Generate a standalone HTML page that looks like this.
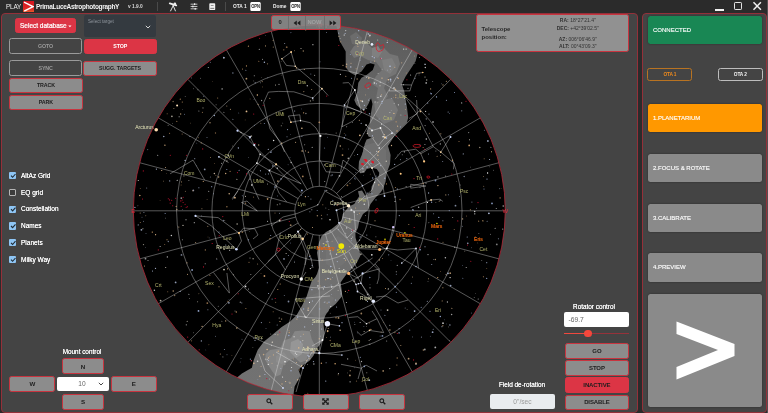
<!DOCTYPE html>
<html lang="en">
<head>
<meta charset="utf-8">
<title>PLAY - PrimaLuceAstrophotographY</title>
<style>
*{box-sizing:border-box;margin:0;padding:0}
html,body{width:768px;height:413px;overflow:hidden;background:#2b2b2b;font-family:"Liberation Sans",sans-serif;color:#fff}
.abs{position:absolute}
#top{position:absolute;left:0;top:0;width:768px;height:13px;background:#2b2b2b}
#top span{position:absolute;white-space:nowrap}
.panel{position:absolute;background:#444;border:1px solid #943039;border-radius:4px}
#main{left:1px;top:13px;width:637px;height:399.5px}
#side{left:642px;top:13px;width:125.3px;height:399.5px}
#sky{position:absolute;left:0;top:0}
.btn{position:absolute;display:flex;align-items:center;justify-content:center;font-weight:bold;font-size:5.3px;letter-spacing:-0.12px;border-radius:2.5px;color:#1d1d1d;background:#8c8c8c;border:1px solid #c8343f;white-space:nowrap}
.btn.red{background:#dc3545;border-color:#dc3545;color:#fff}
.btn.out{background:transparent;border-color:#9a9a9a;color:#9a9a9a}
.sbtn{position:absolute;left:648px;width:114px;height:28.5px;border-radius:2.5px;background:#8a8a8a;color:#fff;font-size:6px;-webkit-text-stroke:0.12px #fff;display:flex;align-items:center;padding-left:5px;box-shadow:0 0 1.5px #222}
.chk{position:absolute;left:8.9px;width:7.4px;height:7.3px;border-radius:1px}
.chk.on{background:#8ec5f4}
.chk.off{border:0.9px solid #b4b4b4;background:#3b3b3b}
.lbl{position:absolute;left:21px;font-size:6.5px;color:#fff;white-space:nowrap;text-shadow:0 0 0.3px #fff}
.cap{position:absolute;font-size:6.4px;color:#fff;white-space:nowrap;text-align:center;text-shadow:0 0 0.3px #fff}
</style>
</head>
<body>
<div id="app" style="position:absolute;left:0;top:0;width:768px;height:413px;will-change:transform;overflow:hidden">
<div id="top">
  <span style="left:6px;top:3.1px;font-size:6.3px;letter-spacing:-0.15px;color:#eee">PLAY</span>
  <svg class="abs" style="left:22.8px;top:1px" width="11.4" height="11.4" viewBox="0 0 11.4 11.4"><defs><linearGradient id="lg" x1="0" y1="0" x2="0" y2="1"><stop offset="0" stop-color="#d4141f"/><stop offset="0.7" stop-color="#dc2a24"/><stop offset="1" stop-color="#e8602c"/></linearGradient></defs><rect width="11.4" height="11.4" rx="0.8" fill="url(#lg)"/><path d="M1 1.2 L10 5.6 L1.2 10.2" fill="none" stroke="#fff" stroke-width="1.5" stroke-linejoin="miter"/></svg>
  <span style="left:36px;top:2.6px;font-size:6.5px;font-weight:bold;letter-spacing:-0.3px;color:#f2f2f2">PrimaLuceAstrophotographY</span>
  <span style="left:128px;top:4px;font-size:4.8px;font-weight:bold;color:#ddd">v 1.9.0</span>
  <div class="abs" style="left:157px;top:2px;width:1px;height:9px;background:#4a4a4a"></div>
  <svg class="abs" style="left:168px;top:1px" width="10" height="12" viewBox="0 0 10 12"><path d="M1.8 2.4 L8.2 4.4" stroke="#eee" stroke-width="1.9" stroke-linecap="round" fill="none"/><path d="M5.4 4.2 L2.6 9.9 M5 4.2 L7.4 9.9" stroke="#eee" stroke-width="0.95" stroke-linecap="round" fill="none"/><circle cx="6.9" cy="2.9" r="1.3" fill="#eee"/></svg>
  <svg class="abs" style="left:189.5px;top:2.8px" width="8" height="7" viewBox="0 0 8 7"><path d="M0.6 1.2 H7.4 M0.6 3.5 H7.4 M0.6 5.8 H7.4" stroke="#eee" stroke-width="0.75"/><rect x="4" y="0.3" width="1.2" height="1.8" fill="#eee"/><rect x="2.3" y="2.6" width="1.2" height="1.8" fill="#eee"/><rect x="4.6" y="4.9" width="1.2" height="1.8" fill="#eee"/></svg>
  <svg class="abs" style="left:208.5px;top:2.8px" width="7" height="7.4" viewBox="0 0 7 7.4"><rect x="0.3" y="0.2" width="5.9" height="6.9" rx="0.9" fill="#f0f0f0"/><rect x="1.8" y="2.1" width="2.8" height="0.6" fill="#555"/><rect x="1.3" y="4.9" width="3.9" height="0.7" fill="#444"/></svg>
  <div class="abs" style="left:225px;top:2px;width:1px;height:9px;background:#4a4a4a"></div>
  <span style="left:233px;top:4px;font-size:4.8px;font-weight:bold;color:#eee">OTA 1</span>
  <span style="left:248.9px;top:2.4px;width:13.1px;height:8.2px;background:#fff;border-radius:1.5px;color:#222;font-size:5.2px;font-weight:bold;text-align:center;line-height:8.8px;letter-spacing:-0.2px;transform:scaleX(0.8)">OPN</span>
  <span style="left:273px;top:4px;font-size:4.8px;font-weight:bold;color:#eee">Dome</span>
  <span style="left:288.9px;top:2.4px;width:13.1px;height:8.2px;background:#fff;border-radius:1.5px;color:#222;font-size:5.2px;font-weight:bold;text-align:center;line-height:8.8px;letter-spacing:-0.2px;transform:scaleX(0.8)">OPN</span>
  <div class="abs" style="left:714.5px;top:8.9px;width:9px;height:1.7px;background:#f2f2f2"></div>
  <div class="abs" style="left:733.5px;top:1.5px;width:8.5px;height:8.5px;border:1.1px solid #e4e4e4;border-radius:1.2px"></div>
  <svg class="abs" style="left:752.3px;top:1px" width="11" height="10" viewBox="0 0 11 10"><path d="M1.5 1.3 L8.9 8.8 M8.9 1.3 L1.5 8.8" stroke="#f0f0f0" stroke-width="1.5"/></svg>
  <div class="abs" style="left:767.2px;top:0;width:1px;height:413px;background:#565052"></div>
</div>

<div id="main" class="panel"></div>
<div id="side" class="panel"></div>

<svg id="sky" width="768" height="413" viewBox="0 0 768 413">
<defs><clipPath id="dc"><circle cx="319.3" cy="210.8" r="186.0"/></clipPath><linearGradient id="mwg" gradientUnits="userSpaceOnUse" x1="0" y1="25" x2="0" y2="397"><stop offset="0" stop-color="#5c5c5c"/><stop offset="0.18" stop-color="#656565"/><stop offset="0.5" stop-color="#6e6e6e"/><stop offset="1" stop-color="#727272"/></linearGradient></defs>
<circle cx="319.3" cy="210.8" r="186.0" fill="#000"/>
<g clip-path="url(#dc)">
<polygon points="336.5,26.0 339.4,40.5 345.7,51.5 345.7,67.6 350.0,72.6 355.0,75.2 361.5,71.4 366.5,64.4 370.3,63.2 374.7,64.4 372.8,70.0 366.5,75.0 361.5,77.7 358.3,82.7 357.0,92.8 354.3,100.0 356.5,105.0 364.0,111.3 368.5,103.8 371.0,98.0 372.5,104.0 370.4,116.4 369.7,124.0 366.6,131.5 368.5,136.5 371.6,137.8 366.6,139.5 364.7,144.0 364.2,148.0 362.3,153.8 359.0,161.4 358.5,169.0 360.4,173.3 364.2,172.7 366.7,169.0 371.7,167.7 376.7,169.0 379.3,172.7 378.6,176.5 374.2,181.5 371.7,186.6 371.0,192.6 368.6,193.5 365.5,196.3 362.0,190.5 358.0,191.3 359.2,196.3 354.2,203.9 349.0,206.4 342.8,214.0 341.6,220.3 337.8,224.0 331.5,229.0 326.0,232.0 321.5,236.3 319.0,242.6 317.0,252.7 318.4,261.5 319.0,267.8 317.0,274.0 315.4,277.0 311.6,281.3 309.0,288.9 306.6,296.4 301.6,306.5 296.5,315.3 290.2,321.6 281.7,327.0 275.7,332.0 263.8,341.8 257.8,349.8 253.8,359.7 251.9,367.7 241.9,373.6 236.5,378.0 236.3,378.4 241.7,381.0 247.2,383.4 252.8,385.6 258.4,387.6 264.1,389.5 269.9,391.2 275.7,392.6 281.6,394.0 287.5,395.1 293.4,396.0 293.6,393.5 294.6,386.5 298.5,379.6 300.5,375.6 298.5,369.7 303.5,364.7 309.5,360.7 313.4,355.8 317.4,347.8 323.4,339.9 324.4,332.0 323.4,324.0 323.6,320.3 325.5,315.3 329.3,309.0 335.6,304.0 341.9,296.4 341.9,291.4 340.6,282.6 343.0,279.0 346.7,274.0 353.0,267.8 356.8,262.7 360.6,255.2 358.0,246.4 355.5,237.6 355.4,233.0 358.0,227.8 359.2,221.5 363.0,214.0 368.0,210.2 370.5,203.9 375.6,197.6 380.6,192.6 383.0,189.0 385.6,181.5 386.8,172.7 390.0,163.9 390.6,155.0 388.0,146.0 395.6,134.0 406.9,122.7 408.2,117.6 407.0,107.6 405.6,99.0 404.3,91.5 401.8,84.0 405.6,76.4 410.6,68.9 415.6,61.3 417.5,54.0 418.6,52.3 411.1,47.9 403.4,43.8 395.5,40.0 387.4,36.6 379.2,33.7 370.9,31.1 362.4,28.8 353.9,27.0 345.3,25.6 336.6,24.6" fill="url(#mwg)"/>
<polygon points="350.0,36.0 356.0,32.0 362.0,38.0 360.0,46.0 352.0,44.0" fill="#6c6c6c"/>
<polygon points="358.0,44.0 364.0,40.0 370.0,46.0 376.0,52.0 384.0,48.0 390.0,54.0 398.0,56.0 400.0,64.0 396.0,74.0 388.0,78.0 384.0,88.0 388.0,96.0 382.0,104.0 376.0,98.0 378.0,88.0 372.0,84.0 376.0,76.0 382.0,70.0 376.0,62.0 368.0,60.0 360.0,56.0 354.0,58.0 350.0,52.0 354.0,46.0" fill="#757575"/>
<polygon points="372.0,48.0 378.0,46.0 382.0,52.0 378.0,58.0 372.0,56.0" fill="#808080"/>
<polygon points="382.0,60.0 392.0,58.0 396.0,66.0 390.0,74.0 384.0,70.0" fill="#7e7e7e"/>
<polygon points="374.0,102.0 392.0,98.0 398.0,110.0 394.0,120.0 384.0,124.0 376.0,116.0" fill="#777777"/>
<polygon points="364.0,146.0 376.0,142.0 386.0,150.0 386.0,166.0 378.0,168.0 366.0,164.0 362.0,156.0" fill="#707070"/>
<polygon points="326.0,244.0 338.0,236.0 350.0,244.0 348.0,260.0 336.0,270.0 326.0,264.0" fill="#737373"/>
<polygon points="310.0,296.0 324.0,290.0 334.0,298.0 328.0,312.0 316.0,318.0 308.0,310.0" fill="#747474"/>
<polygon points="265.5,354.0 270.0,350.0 280.6,348.3 283.4,340.8 291.0,338.0 294.7,331.3 302.3,330.4 309.8,331.3 311.7,338.9 315.5,346.4 309.8,352.0 306.0,360.6 300.4,362.5 294.7,357.7 289.0,360.6 283.4,365.3 280.6,374.7 275.8,376.6 272.0,371.0 268.3,365.3 265.5,360.6" fill="#868686"/>
<polygon points="291.0,342.0 298.0,339.0 303.0,344.0 302.0,354.0 296.0,358.0 290.0,352.0" fill="#969696"/>
<polygon points="276.0,356.0 284.0,352.0 288.0,358.0 282.0,364.0 276.0,362.0" fill="#8c8c8c"/>
<g fill="none" stroke="#e0e0e0" stroke-opacity="0.52" stroke-width="0.75">
<circle cx="319.3" cy="210.8" r="24.49"/>
<circle cx="319.3" cy="210.8" r="49.84"/>
<circle cx="319.3" cy="210.8" r="77.04"/>
<circle cx="319.3" cy="210.8" r="107.39"/>
<circle cx="319.3" cy="210.8" r="142.72"/>
<line x1="343.8" y1="210.8" x2="505.3" y2="210.8"/>
<line x1="343.0" y1="217.1" x2="499.0" y2="258.9"/>
<line x1="340.5" y1="223.0" x2="480.4" y2="303.8"/>
<line x1="336.6" y1="228.1" x2="450.8" y2="342.3"/>
<line x1="331.5" y1="232.0" x2="412.3" y2="371.9"/>
<line x1="325.6" y1="234.5" x2="367.4" y2="390.5"/>
<line x1="319.3" y1="235.3" x2="319.3" y2="396.8"/>
<line x1="313.0" y1="234.5" x2="271.2" y2="390.5"/>
<line x1="307.1" y1="232.0" x2="226.3" y2="371.9"/>
<line x1="302.0" y1="228.1" x2="187.8" y2="342.3"/>
<line x1="298.1" y1="223.0" x2="158.2" y2="303.8"/>
<line x1="295.6" y1="217.1" x2="139.6" y2="258.9"/>
<line x1="294.8" y1="210.8" x2="133.3" y2="210.8"/>
<line x1="295.6" y1="204.5" x2="139.6" y2="162.7"/>
<line x1="298.1" y1="198.6" x2="158.2" y2="117.8"/>
<line x1="302.0" y1="193.5" x2="187.8" y2="79.3"/>
<line x1="307.1" y1="189.6" x2="226.3" y2="49.7"/>
<line x1="313.0" y1="187.1" x2="271.2" y2="31.1"/>
<line x1="319.3" y1="186.3" x2="319.3" y2="24.8"/>
<line x1="325.6" y1="187.1" x2="367.4" y2="31.1"/>
<line x1="331.5" y1="189.6" x2="412.3" y2="49.7"/>
<line x1="336.6" y1="193.5" x2="450.8" y2="79.3"/>
<line x1="340.5" y1="198.6" x2="480.4" y2="117.8"/>
<line x1="343.0" y1="204.5" x2="499.0" y2="162.7"/>
</g>
<g fill="none" stroke="#f2f2f2" stroke-opacity="0.62" stroke-width="0.6" stroke-linejoin="round">
<polyline points="291.1,52.1 281.9,58.8 286.4,65.4 295.3,66.3 291.1,52.1"/>
<polyline points="295.3,66.3 321.9,88.7 328.2,95.6"/>
<polyline points="321.9,88.7 312.7,98.1 301.8,94.3 293.8,91.8 278.4,91.4 268.4,92.1 263.7,102.6 270.0,129.0 281.0,142.5 284.5,152.0"/>
<polyline points="312.7,98.1 313.2,101.0"/>
<polyline points="288.4,116.0 299.8,114.8 300.5,120.5 290.9,122.2 288.4,116.0"/>
<polyline points="300.5,120.5 310.2,122.7 316.0,128.0 320.4,135.9"/>
<polyline points="342.7,83.0 348.6,82.6 354.9,90.0 344.4,105.1 341.9,126.8 353.0,121.0 361.6,112.6 354.9,90.0"/>
<polyline points="344.4,105.1 361.6,112.6"/>
<polyline points="422.8,72.5 416.6,73.4 411.6,85.0 400.7,84.7"/>
<polyline points="411.6,85.0 409.9,90.9 389.0,90.9"/>
<polyline points="366.0,125.0 372.0,130.5 380.5,128.0 385.0,137.5 392.0,133.0"/>
<polyline points="372.5,138.0 378.0,146.0 384.8,137.8"/>
<polyline points="406.6,99.3 416.6,113.5 424.1,129.2 433.3,146.7 440.8,152.1 450.5,137.0"/>
<polyline points="416.6,100.0 417.4,113.5 409.0,118.5"/>
<polyline points="440.8,152.1 454.2,163.4 453.4,169.3"/>
<polyline points="394.9,159.3 401.5,151.4 415.8,149.2 420.8,153.7 424.1,161.4"/>
<polyline points="433.3,146.7 420.8,153.7"/>
<polyline points="410.7,184.3 425.8,186.0 410.7,188.2 410.7,184.3"/>
<polyline points="410.7,207.5 431.1,200.0 440.0,199.2 442.8,201.4"/>
<polyline points="366.0,160.0 372.0,168.0 376.0,178.0 372.0,190.0 364.0,197.0 358.0,203.0"/>
<polyline points="376.0,178.0 383.0,186.0 384.5,196.0"/>
<polyline points="372.0,168.0 380.0,163.0"/>
<polyline points="320.4,135.9 319.6,159.3 326.2,171.8 340.4,172.6 343.0,160.1 360.5,172.6"/>
<polyline points="348.5,205.8 336.5,210.2 339.0,222.8 347.0,238.0 355.5,230.0 354.2,212.0 348.5,205.8"/>
<polyline points="348.5,205.8 340.0,199.0 333.4,195.7"/>
<polyline points="333.4,195.7 325.0,191.0 318.0,205.0 308.0,209.0 297.0,213.5 283.0,217.0 271.0,226.0"/>
<polyline points="237.5,130.7 250.0,137.0 254.3,145.1 260.2,154.2 256.9,163.1 269.4,170.5 276.1,164.3 260.2,154.2"/>
<polyline points="276.1,164.3 301.2,183.8 269.4,170.5"/>
<polyline points="256.9,163.1 248.4,171.3 243.9,180.6 232.5,199.5"/>
<polyline points="248.4,171.3 252.7,185.6 259.0,199.5"/>
<polyline points="269.4,170.5 279.1,193.2 286.7,202.0"/>
<polyline points="218.9,156.8 228.6,162.6"/>
<polyline points="170.1,173.8 193.0,160.1 204.7,180.1"/>
<polyline points="232.3,198.4 238.1,190.8"/>
<polyline points="241.5,202.5 257.3,210.9 247.0,201.0 241.5,202.5"/>
<polyline points="195.5,215.9 218.1,217.6 239.0,233.1 241.5,241.0 236.4,249.3 211.4,225.9 195.5,215.9"/>
<polyline points="239.0,233.1 243.6,228.1 254.8,228.8 258.0,235.0 253.0,239.0"/>
<polyline points="280.4,232.7 275.4,254.2 267.8,261.7"/>
<polyline points="275.4,254.2 285.4,270.0"/>
<polyline points="302.6,238.8 306.0,247.0 311.0,258.0 313.0,268.0"/>
<polyline points="298.0,231.5 302.0,243.0 306.0,253.0 305.0,265.0"/>
<polyline points="302.6,238.8 298.0,231.5"/>
<polyline points="301.3,279.0 306.0,272.0"/>
<polyline points="213.5,272.5 229.4,293.1 226.9,273.0"/>
<polyline points="295.0,299.0 306.0,318.0 322.0,296.0 331.0,290.0 339.0,283.0"/>
<polyline points="295.0,299.0 330.0,296.0"/>
<polyline points="348.7,273.4 357.5,278.1 362.6,273.4"/>
<polyline points="348.7,273.4 356.0,284.5 357.5,291.5"/>
<polyline points="362.6,273.4 360.9,283.2 373.4,301.2"/>
<polyline points="356.0,284.5 358.4,283.8 360.9,283.2"/>
<polyline points="357.5,291.5 373.4,301.2"/>
<polyline points="348.7,273.4 356.7,268.1 372.6,258.0"/>
<polyline points="375.1,263.9 379.3,268.9 378.8,278.1 377.0,284.0"/>
<polyline points="362.6,273.4 379.3,268.9"/>
<polyline points="356.7,268.1 352.0,258.0 349.0,252.0"/>
<polyline points="352.5,248.4 379.6,249.4 386.8,248.4 397.7,250.0 416.0,248.4 418.5,268.4"/>
<polyline points="416.0,248.4 401.8,263.1"/>
<polyline points="386.8,248.4 389.0,244.0 393.2,227.1"/>
<polyline points="348.6,317.5 357.8,316.7 366.5,323.7 377.0,318.7 372.0,310.9"/>
<polyline points="356.9,331.4 361.1,335.4 369.5,330.4 383.7,332.6 377.0,318.7"/>
<polyline points="327.4,323.7 339.4,325.9"/>
<polyline points="327.4,323.7 322.5,340.0 319.3,353.1 341.9,355.1"/>
<polyline points="319.3,353.1 312.0,352.0 303.0,368.0 296.0,392.0"/>
<polyline points="322.5,340.0 312.0,346.0"/>
<polyline points="341.0,364.3 361.1,368.2 366.1,365.2 377.0,371.0"/>
<polyline points="361.1,368.2 358.0,379.0"/>
<polyline points="259.0,354.0 265.0,371.0 283.0,388.0"/>
<polyline points="303.0,368.0 290.0,360.0 276.0,352.0"/>
<polyline points="376.0,297.0 386.0,296.0 398.0,303.0 408.0,300.0"/>
</g>
<circle cx="253.8" cy="80.9" r="0.40" fill="#c8c8c8" fill-opacity="0.92"/>
<circle cx="168.3" cy="241.6" r="0.75" fill="#b9c6e6" fill-opacity="0.57"/>
<circle cx="294.6" cy="50.8" r="0.45" fill="#f0c898" fill-opacity="0.74"/>
<circle cx="216.3" cy="258.2" r="0.40" fill="#c89868" fill-opacity="0.81"/>
<circle cx="340.4" cy="74.3" r="0.60" fill="#ffffff" fill-opacity="0.79"/>
<circle cx="345.7" cy="233.2" r="0.50" fill="#c8c8c8" fill-opacity="0.81"/>
<circle cx="371.0" cy="163.3" r="0.75" fill="#aab8d8" fill-opacity="0.58"/>
<circle cx="386.4" cy="183.9" r="0.55" fill="#d8a870" fill-opacity="0.81"/>
<circle cx="301.9" cy="136.3" r="0.50" fill="#aab8d8" fill-opacity="0.90"/>
<circle cx="163.8" cy="136.5" r="0.65" fill="#c8d4f4" fill-opacity="0.88"/>
<circle cx="177.2" cy="180.3" r="0.55" fill="#ffffff" fill-opacity="0.97"/>
<circle cx="290.2" cy="382.7" r="0.45" fill="#f0c898" fill-opacity="0.81"/>
<circle cx="459.0" cy="141.5" r="0.55" fill="#c89868" fill-opacity="0.77"/>
<circle cx="168.1" cy="125.2" r="0.45" fill="#d8d8d8" fill-opacity="0.88"/>
<circle cx="248.5" cy="239.8" r="0.65" fill="#9fb2dc" fill-opacity="0.87"/>
<circle cx="463.3" cy="153.9" r="0.65" fill="#c8d4f4" fill-opacity="0.63"/>
<circle cx="419.1" cy="72.9" r="0.50" fill="#e0b888" fill-opacity="0.73"/>
<circle cx="300.4" cy="229.2" r="0.50" fill="#e0b888" fill-opacity="0.94"/>
<circle cx="236.9" cy="179.3" r="0.55" fill="#e8e0d0" fill-opacity="0.95"/>
<circle cx="198.9" cy="111.1" r="0.50" fill="#d8d8d8" fill-opacity="0.77"/>
<circle cx="352.5" cy="122.5" r="0.40" fill="#ffffff" fill-opacity="0.74"/>
<circle cx="270.7" cy="235.5" r="0.50" fill="#aab8d8" fill-opacity="0.94"/>
<circle cx="486.8" cy="268.4" r="0.40" fill="#d8a870" fill-opacity="0.95"/>
<circle cx="423.4" cy="350.1" r="0.75" fill="#e0b888" fill-opacity="0.73"/>
<circle cx="279.9" cy="203.9" r="0.60" fill="#d8d8d8" fill-opacity="0.64"/>
<circle cx="499.6" cy="188.7" r="0.45" fill="#c8d4f4" fill-opacity="0.82"/>
<circle cx="171.4" cy="235.6" r="0.75" fill="#c8c8c8" fill-opacity="0.98"/>
<circle cx="361.6" cy="51.0" r="0.50" fill="#c89868" fill-opacity="0.72"/>
<circle cx="369.3" cy="380.2" r="0.90" fill="#c8d4f4" fill-opacity="0.76"/>
<circle cx="176.2" cy="206.4" r="0.65" fill="#d8a870" fill-opacity="0.77"/>
<circle cx="260.8" cy="123.3" r="0.50" fill="#f0c898" fill-opacity="0.56"/>
<circle cx="487.1" cy="221.3" r="0.50" fill="#aab8d8" fill-opacity="0.79"/>
<circle cx="143.4" cy="221.3" r="0.45" fill="#aab8d8" fill-opacity="0.93"/>
<circle cx="326.1" cy="362.7" r="0.55" fill="#b9c6e6" fill-opacity="0.79"/>
<circle cx="423.1" cy="147.4" r="0.50" fill="#c89868" fill-opacity="0.92"/>
<circle cx="433.2" cy="329.2" r="0.50" fill="#b9c6e6" fill-opacity="0.78"/>
<circle cx="265.6" cy="35.6" r="0.40" fill="#9fb2dc" fill-opacity="0.76"/>
<circle cx="205.3" cy="249.9" r="0.55" fill="#d8a870" fill-opacity="0.91"/>
<circle cx="402.3" cy="154.8" r="0.55" fill="#c8c8c8" fill-opacity="0.65"/>
<circle cx="217.7" cy="98.0" r="0.50" fill="#d8a870" fill-opacity="0.83"/>
<circle cx="311.7" cy="267.7" r="0.45" fill="#e8e0d0" fill-opacity="0.60"/>
<circle cx="277.8" cy="289.5" r="0.50" fill="#d8a870" fill-opacity="0.95"/>
<circle cx="294.7" cy="261.3" r="0.45" fill="#aab8d8" fill-opacity="0.73"/>
<circle cx="282.6" cy="377.0" r="0.50" fill="#ffffff" fill-opacity="1.00"/>
<circle cx="143.5" cy="244.6" r="0.65" fill="#e8e0d0" fill-opacity="0.62"/>
<circle cx="377.8" cy="155.2" r="0.75" fill="#f0c898" fill-opacity="0.61"/>
<circle cx="375.0" cy="220.7" r="0.50" fill="#e0b888" fill-opacity="0.99"/>
<circle cx="205.8" cy="349.9" r="0.40" fill="#9fb2dc" fill-opacity="0.65"/>
<circle cx="319.7" cy="308.9" r="0.55" fill="#9fb2dc" fill-opacity="0.79"/>
<circle cx="408.6" cy="358.7" r="0.90" fill="#f0c898" fill-opacity="0.74"/>
<circle cx="474.7" cy="211.4" r="0.75" fill="#ffffff" fill-opacity="0.79"/>
<circle cx="140.3" cy="188.5" r="0.50" fill="#c89868" fill-opacity="0.55"/>
<circle cx="430.6" cy="88.9" r="0.65" fill="#c89868" fill-opacity="0.88"/>
<circle cx="340.3" cy="146.1" r="0.75" fill="#f0c898" fill-opacity="0.80"/>
<circle cx="425.0" cy="64.3" r="0.75" fill="#d8d8d8" fill-opacity="0.66"/>
<circle cx="236.3" cy="312.1" r="0.75" fill="#d8a870" fill-opacity="0.80"/>
<circle cx="416.0" cy="364.2" r="0.65" fill="#c8d4f4" fill-opacity="0.83"/>
<circle cx="321.4" cy="215.3" r="0.55" fill="#d8a870" fill-opacity="0.78"/>
<circle cx="433.6" cy="213.7" r="0.50" fill="#aab8d8" fill-opacity="0.79"/>
<circle cx="208.7" cy="191.3" r="0.60" fill="#c8c8c8" fill-opacity="0.73"/>
<circle cx="250.8" cy="274.5" r="0.60" fill="#c8c8c8" fill-opacity="0.65"/>
<circle cx="245.9" cy="70.3" r="0.50" fill="#aab8d8" fill-opacity="0.84"/>
<circle cx="269.5" cy="119.0" r="0.50" fill="#d8a870" fill-opacity="0.65"/>
<circle cx="487.6" cy="173.0" r="0.65" fill="#ffffff" fill-opacity="1.00"/>
<circle cx="443.0" cy="84.9" r="0.60" fill="#f0c898" fill-opacity="0.73"/>
<circle cx="290.0" cy="157.5" r="0.45" fill="#aab8d8" fill-opacity="0.71"/>
<circle cx="259.0" cy="195.4" r="0.40" fill="#e0b888" fill-opacity="0.70"/>
<circle cx="365.4" cy="215.4" r="0.45" fill="#c8c8c8" fill-opacity="0.99"/>
<circle cx="172.3" cy="123.6" r="0.40" fill="#ffffff" fill-opacity="0.67"/>
<circle cx="181.5" cy="181.9" r="0.55" fill="#e0b888" fill-opacity="0.62"/>
<circle cx="475.2" cy="237.1" r="0.55" fill="#c8c8c8" fill-opacity="0.68"/>
<circle cx="430.7" cy="93.0" r="0.45" fill="#9fb2dc" fill-opacity="0.97"/>
<circle cx="369.3" cy="323.0" r="0.45" fill="#c89868" fill-opacity="0.94"/>
<circle cx="302.1" cy="151.0" r="0.75" fill="#e0b888" fill-opacity="0.97"/>
<circle cx="232.9" cy="72.9" r="0.75" fill="#aab8d8" fill-opacity="0.66"/>
<circle cx="249.4" cy="138.3" r="0.50" fill="#9fb2dc" fill-opacity="0.75"/>
<circle cx="383.3" cy="125.4" r="0.40" fill="#9fb2dc" fill-opacity="0.57"/>
<circle cx="140.2" cy="212.9" r="0.50" fill="#f0c898" fill-opacity="0.76"/>
<circle cx="437.9" cy="185.6" r="0.65" fill="#f0c898" fill-opacity="0.93"/>
<circle cx="279.5" cy="213.3" r="0.50" fill="#b9c6e6" fill-opacity="0.70"/>
<circle cx="442.9" cy="287.7" r="0.50" fill="#e0b888" fill-opacity="1.00"/>
<circle cx="460.6" cy="185.0" r="0.40" fill="#c8c8c8" fill-opacity="0.85"/>
<circle cx="275.0" cy="213.0" r="0.55" fill="#c89868" fill-opacity="0.66"/>
<circle cx="242.3" cy="195.7" r="0.50" fill="#9fb2dc" fill-opacity="0.75"/>
<circle cx="495.1" cy="228.3" r="0.50" fill="#d8d8d8" fill-opacity="0.98"/>
<circle cx="248.5" cy="157.4" r="0.40" fill="#c8d4f4" fill-opacity="0.72"/>
<circle cx="309.9" cy="211.8" r="0.50" fill="#b9c6e6" fill-opacity="0.78"/>
<circle cx="166.7" cy="173.4" r="0.40" fill="#e0b888" fill-opacity="0.56"/>
<circle cx="246.5" cy="111.4" r="0.90" fill="#f0c898" fill-opacity="0.93"/>
<circle cx="425.0" cy="246.7" r="0.55" fill="#aab8d8" fill-opacity="0.99"/>
<circle cx="188.9" cy="294.2" r="0.50" fill="#d8d8d8" fill-opacity="0.92"/>
<circle cx="399.3" cy="215.6" r="0.60" fill="#aab8d8" fill-opacity="0.87"/>
<circle cx="321.4" cy="363.3" r="0.75" fill="#c89868" fill-opacity="0.93"/>
<circle cx="432.6" cy="332.2" r="0.90" fill="#aab8d8" fill-opacity="0.86"/>
<circle cx="391.2" cy="110.3" r="0.40" fill="#d8d8d8" fill-opacity="0.61"/>
<circle cx="267.5" cy="63.8" r="0.65" fill="#f0c898" fill-opacity="0.57"/>
<circle cx="140.3" cy="222.5" r="0.50" fill="#d8a870" fill-opacity="0.67"/>
<circle cx="303.3" cy="50.9" r="0.75" fill="#f0c898" fill-opacity="0.59"/>
<circle cx="329.0" cy="302.2" r="0.65" fill="#9fb2dc" fill-opacity="0.91"/>
<circle cx="448.1" cy="112.1" r="0.50" fill="#b9c6e6" fill-opacity="0.88"/>
<circle cx="496.3" cy="208.5" r="0.60" fill="#c8c8c8" fill-opacity="0.77"/>
<circle cx="387.6" cy="310.1" r="0.90" fill="#e8e0d0" fill-opacity="0.84"/>
<circle cx="227.8" cy="301.3" r="0.55" fill="#c89868" fill-opacity="0.81"/>
<circle cx="233.3" cy="274.8" r="0.50" fill="#e8e0d0" fill-opacity="0.77"/>
<circle cx="397.0" cy="131.0" r="0.65" fill="#d8a870" fill-opacity="0.90"/>
<circle cx="502.8" cy="229.1" r="0.55" fill="#c8c8c8" fill-opacity="0.97"/>
<circle cx="139.8" cy="195.5" r="0.75" fill="#d8a870" fill-opacity="1.00"/>
<circle cx="277.2" cy="365.8" r="0.50" fill="#c8c8c8" fill-opacity="0.81"/>
<circle cx="186.0" cy="219.8" r="0.55" fill="#ffffff" fill-opacity="0.82"/>
<circle cx="368.3" cy="128.8" r="0.45" fill="#aab8d8" fill-opacity="0.71"/>
<circle cx="318.5" cy="350.7" r="0.60" fill="#d8d8d8" fill-opacity="0.62"/>
<circle cx="486.7" cy="278.4" r="0.60" fill="#9fb2dc" fill-opacity="0.88"/>
<circle cx="288.1" cy="164.7" r="0.45" fill="#c8d4f4" fill-opacity="0.55"/>
<circle cx="412.6" cy="336.9" r="0.45" fill="#b9c6e6" fill-opacity="0.87"/>
<circle cx="468.7" cy="132.6" r="0.55" fill="#c8c8c8" fill-opacity="0.73"/>
<circle cx="267.5" cy="184.0" r="0.55" fill="#d8d8d8" fill-opacity="0.68"/>
<circle cx="152.5" cy="271.1" r="0.50" fill="#b9c6e6" fill-opacity="0.99"/>
<circle cx="295.6" cy="142.2" r="0.55" fill="#e0b888" fill-opacity="0.95"/>
<circle cx="435.3" cy="259.5" r="0.75" fill="#f0c898" fill-opacity="0.64"/>
<circle cx="286.1" cy="253.5" r="0.50" fill="#e8e0d0" fill-opacity="0.94"/>
<circle cx="313.9" cy="364.0" r="0.75" fill="#ffffff" fill-opacity="0.63"/>
<circle cx="287.6" cy="129.6" r="0.55" fill="#aab8d8" fill-opacity="0.88"/>
<circle cx="376.1" cy="175.9" r="0.50" fill="#9fb2dc" fill-opacity="0.77"/>
<circle cx="382.1" cy="69.3" r="0.50" fill="#c8c8c8" fill-opacity="0.64"/>
<circle cx="470.3" cy="209.7" r="0.50" fill="#d8a870" fill-opacity="0.96"/>
<circle cx="185.2" cy="96.4" r="0.45" fill="#ffffff" fill-opacity="0.70"/>
<circle cx="167.2" cy="113.8" r="0.55" fill="#c89868" fill-opacity="0.64"/>
<circle cx="275.7" cy="302.3" r="0.50" fill="#e0b888" fill-opacity="0.67"/>
<circle cx="413.1" cy="210.1" r="0.90" fill="#c8d4f4" fill-opacity="0.61"/>
<circle cx="320.6" cy="259.0" r="0.50" fill="#c8c8c8" fill-opacity="0.67"/>
<circle cx="225.7" cy="173.5" r="0.65" fill="#e0b888" fill-opacity="0.98"/>
<circle cx="397.2" cy="358.0" r="0.65" fill="#c89868" fill-opacity="0.77"/>
<circle cx="478.6" cy="221.2" r="0.65" fill="#d8a870" fill-opacity="0.66"/>
<circle cx="327.6" cy="278.5" r="0.65" fill="#c8c8c8" fill-opacity="0.80"/>
<circle cx="373.4" cy="137.8" r="0.50" fill="#e8e0d0" fill-opacity="0.66"/>
<circle cx="370.0" cy="284.7" r="0.45" fill="#c8c8c8" fill-opacity="0.58"/>
<circle cx="328.4" cy="241.6" r="0.60" fill="#9fb2dc" fill-opacity="0.65"/>
<circle cx="245.5" cy="196.2" r="0.55" fill="#e8e0d0" fill-opacity="0.93"/>
<circle cx="223.5" cy="220.6" r="0.75" fill="#b9c6e6" fill-opacity="0.56"/>
<circle cx="286.5" cy="266.5" r="0.40" fill="#d8d8d8" fill-opacity="0.64"/>
<circle cx="462.5" cy="265.5" r="0.45" fill="#9fb2dc" fill-opacity="0.65"/>
<circle cx="291.1" cy="162.5" r="0.65" fill="#d8d8d8" fill-opacity="0.86"/>
<circle cx="400.5" cy="159.6" r="0.60" fill="#b9c6e6" fill-opacity="0.55"/>
<circle cx="242.0" cy="339.2" r="0.45" fill="#b9c6e6" fill-opacity="0.77"/>
<circle cx="207.9" cy="309.7" r="0.50" fill="#b9c6e6" fill-opacity="0.76"/>
<circle cx="231.9" cy="355.6" r="0.45" fill="#c89868" fill-opacity="0.77"/>
<circle cx="203.0" cy="107.9" r="0.60" fill="#e8e0d0" fill-opacity="0.58"/>
<circle cx="354.6" cy="367.8" r="0.40" fill="#b9c6e6" fill-opacity="0.56"/>
<circle cx="355.1" cy="179.3" r="0.40" fill="#ffffff" fill-opacity="0.73"/>
<circle cx="479.9" cy="147.3" r="0.50" fill="#e8e0d0" fill-opacity="0.97"/>
<circle cx="380.5" cy="165.6" r="0.55" fill="#c8d4f4" fill-opacity="0.75"/>
<circle cx="163.3" cy="181.1" r="0.45" fill="#f0c898" fill-opacity="0.98"/>
<circle cx="210.5" cy="157.5" r="0.55" fill="#e0b888" fill-opacity="0.59"/>
<circle cx="395.7" cy="97.6" r="0.75" fill="#d8a870" fill-opacity="0.64"/>
<circle cx="268.8" cy="358.5" r="0.40" fill="#e8e0d0" fill-opacity="0.73"/>
<circle cx="435.3" cy="310.0" r="0.40" fill="#e0b888" fill-opacity="0.57"/>
<circle cx="228.9" cy="302.8" r="0.90" fill="#c8d4f4" fill-opacity="0.71"/>
<circle cx="257.9" cy="379.6" r="0.40" fill="#9fb2dc" fill-opacity="0.89"/>
<circle cx="389.8" cy="368.6" r="0.55" fill="#d8d8d8" fill-opacity="0.87"/>
<circle cx="354.9" cy="324.5" r="0.45" fill="#d8d8d8" fill-opacity="0.92"/>
<circle cx="173.2" cy="291.0" r="0.65" fill="#e0b888" fill-opacity="0.91"/>
<circle cx="182.7" cy="209.5" r="0.40" fill="#aab8d8" fill-opacity="0.69"/>
<circle cx="390.8" cy="81.1" r="0.50" fill="#c8d4f4" fill-opacity="0.94"/>
<circle cx="304.7" cy="316.4" r="0.90" fill="#c8c8c8" fill-opacity="0.78"/>
<circle cx="279.0" cy="84.3" r="0.60" fill="#c8c8c8" fill-opacity="0.84"/>
<circle cx="312.5" cy="227.4" r="0.50" fill="#e0b888" fill-opacity="0.95"/>
<circle cx="318.7" cy="288.8" r="0.65" fill="#ffffff" fill-opacity="0.66"/>
<circle cx="288.4" cy="255.6" r="0.50" fill="#aab8d8" fill-opacity="0.79"/>
<circle cx="421.2" cy="307.4" r="0.55" fill="#9fb2dc" fill-opacity="0.68"/>
<circle cx="232.9" cy="119.3" r="0.55" fill="#b9c6e6" fill-opacity="0.75"/>
<circle cx="202.4" cy="112.4" r="0.55" fill="#c89868" fill-opacity="0.63"/>
<circle cx="224.8" cy="220.6" r="0.45" fill="#e8e0d0" fill-opacity="0.76"/>
<circle cx="461.7" cy="110.8" r="0.65" fill="#c8d4f4" fill-opacity="0.57"/>
<circle cx="242.5" cy="69.1" r="0.50" fill="#c89868" fill-opacity="0.99"/>
<circle cx="350.2" cy="370.8" r="0.55" fill="#f0c898" fill-opacity="0.94"/>
<circle cx="300.4" cy="121.5" r="0.40" fill="#c8c8c8" fill-opacity="0.84"/>
<circle cx="397.3" cy="154.9" r="0.40" fill="#c8d4f4" fill-opacity="0.70"/>
<circle cx="437.9" cy="176.9" r="0.55" fill="#ffffff" fill-opacity="0.83"/>
<circle cx="317.7" cy="204.7" r="0.60" fill="#c8c8c8" fill-opacity="0.91"/>
<circle cx="380.3" cy="82.3" r="0.75" fill="#c8c8c8" fill-opacity="0.84"/>
<circle cx="281.3" cy="125.7" r="0.55" fill="#e8e0d0" fill-opacity="0.69"/>
<circle cx="487.9" cy="141.0" r="0.90" fill="#c8d4f4" fill-opacity="0.74"/>
<circle cx="431.7" cy="264.5" r="0.60" fill="#aab8d8" fill-opacity="0.73"/>
<circle cx="483.7" cy="186.3" r="0.50" fill="#e0b888" fill-opacity="0.60"/>
<circle cx="167.0" cy="239.7" r="0.55" fill="#d8a870" fill-opacity="0.90"/>
<circle cx="186.3" cy="324.8" r="0.60" fill="#c8c8c8" fill-opacity="0.81"/>
<circle cx="478.2" cy="299.1" r="0.50" fill="#ffffff" fill-opacity="0.71"/>
<circle cx="193.5" cy="88.7" r="0.45" fill="#c8c8c8" fill-opacity="0.72"/>
<circle cx="413.6" cy="319.5" r="0.50" fill="#9fb2dc" fill-opacity="0.61"/>
<circle cx="312.9" cy="44.7" r="0.60" fill="#c8c8c8" fill-opacity="0.96"/>
<circle cx="364.1" cy="331.5" r="0.50" fill="#e8e0d0" fill-opacity="0.90"/>
<circle cx="215.9" cy="175.3" r="0.50" fill="#d8a870" fill-opacity="0.63"/>
<circle cx="214.4" cy="173.5" r="0.75" fill="#ffffff" fill-opacity="0.72"/>
<circle cx="179.1" cy="116.7" r="0.50" fill="#d8d8d8" fill-opacity="0.95"/>
<circle cx="446.7" cy="274.9" r="0.55" fill="#c8c8c8" fill-opacity="0.73"/>
<circle cx="302.8" cy="340.6" r="0.55" fill="#e8e0d0" fill-opacity="0.74"/>
<circle cx="350.0" cy="183.2" r="0.55" fill="#d8a870" fill-opacity="0.78"/>
<circle cx="500.1" cy="197.9" r="0.65" fill="#c89868" fill-opacity="0.90"/>
<circle cx="303.8" cy="91.6" r="0.65" fill="#e0b888" fill-opacity="0.60"/>
<circle cx="181.1" cy="185.0" r="0.45" fill="#d8a870" fill-opacity="0.78"/>
<circle cx="377.7" cy="39.9" r="0.50" fill="#c8c8c8" fill-opacity="0.96"/>
<circle cx="250.0" cy="292.8" r="0.45" fill="#d8d8d8" fill-opacity="0.89"/>
<circle cx="466.2" cy="267.6" r="0.50" fill="#d8d8d8" fill-opacity="0.94"/>
<circle cx="436.5" cy="96.9" r="0.65" fill="#9fb2dc" fill-opacity="0.98"/>
<circle cx="157.7" cy="155.3" r="0.55" fill="#ffffff" fill-opacity="0.70"/>
<circle cx="361.5" cy="361.5" r="0.65" fill="#ffffff" fill-opacity="0.66"/>
<circle cx="492.0" cy="203.4" r="0.90" fill="#9fb2dc" fill-opacity="0.83"/>
<circle cx="221.6" cy="163.3" r="0.50" fill="#ffffff" fill-opacity="0.73"/>
<circle cx="370.1" cy="128.3" r="0.55" fill="#e0b888" fill-opacity="0.63"/>
<circle cx="425.3" cy="67.6" r="0.75" fill="#d8d8d8" fill-opacity="0.84"/>
<circle cx="267.1" cy="349.5" r="0.75" fill="#f0c898" fill-opacity="0.81"/>
<circle cx="280.0" cy="321.5" r="0.55" fill="#e0b888" fill-opacity="1.00"/>
<circle cx="348.1" cy="158.8" r="0.45" fill="#d8a870" fill-opacity="0.65"/>
<circle cx="362.2" cy="381.2" r="0.55" fill="#f0c898" fill-opacity="0.66"/>
<circle cx="351.2" cy="271.7" r="0.55" fill="#aab8d8" fill-opacity="0.55"/>
<circle cx="362.5" cy="185.6" r="0.75" fill="#c8d4f4" fill-opacity="0.95"/>
<circle cx="182.4" cy="109.3" r="0.40" fill="#d8d8d8" fill-opacity="0.57"/>
<circle cx="344.3" cy="137.8" r="0.75" fill="#c8d4f4" fill-opacity="0.79"/>
<circle cx="287.0" cy="136.8" r="0.50" fill="#b9c6e6" fill-opacity="0.71"/>
<circle cx="441.5" cy="83.8" r="0.40" fill="#b9c6e6" fill-opacity="0.87"/>
<circle cx="301.0" cy="48.5" r="0.50" fill="#e8e0d0" fill-opacity="0.90"/>
<circle cx="282.8" cy="123.1" r="0.40" fill="#d8d8d8" fill-opacity="0.84"/>
<circle cx="342.5" cy="155.1" r="0.90" fill="#d8a870" fill-opacity="0.82"/>
<circle cx="325.8" cy="208.1" r="0.50" fill="#d8d8d8" fill-opacity="0.57"/>
<circle cx="331.0" cy="175.8" r="0.50" fill="#ffffff" fill-opacity="0.58"/>
<circle cx="338.2" cy="374.8" r="0.50" fill="#e0b888" fill-opacity="0.64"/>
<circle cx="359.5" cy="213.4" r="0.60" fill="#c89868" fill-opacity="0.63"/>
<circle cx="248.4" cy="136.5" r="0.40" fill="#aab8d8" fill-opacity="0.90"/>
<circle cx="447.4" cy="302.0" r="0.65" fill="#c8c8c8" fill-opacity="0.88"/>
<circle cx="301.6" cy="108.9" r="0.45" fill="#9fb2dc" fill-opacity="0.65"/>
<circle cx="147.7" cy="149.6" r="0.55" fill="#aab8d8" fill-opacity="0.57"/>
<circle cx="369.8" cy="277.5" r="0.75" fill="#9fb2dc" fill-opacity="0.68"/>
<circle cx="165.1" cy="213.6" r="0.50" fill="#9fb2dc" fill-opacity="0.96"/>
<circle cx="446.4" cy="100.2" r="0.50" fill="#aab8d8" fill-opacity="0.96"/>
<circle cx="204.7" cy="169.4" r="0.90" fill="#b9c6e6" fill-opacity="0.72"/>
<circle cx="332.8" cy="200.4" r="0.75" fill="#aab8d8" fill-opacity="0.55"/>
<circle cx="220.3" cy="353.9" r="0.50" fill="#e0b888" fill-opacity="0.83"/>
<circle cx="261.6" cy="77.6" r="0.40" fill="#d8d8d8" fill-opacity="0.57"/>
<circle cx="391.0" cy="260.6" r="0.45" fill="#aab8d8" fill-opacity="0.57"/>
<circle cx="451.9" cy="308.2" r="0.50" fill="#f0c898" fill-opacity="0.95"/>
<circle cx="173.1" cy="101.3" r="0.45" fill="#d8d8d8" fill-opacity="0.57"/>
<circle cx="448.7" cy="326.9" r="0.45" fill="#e8e0d0" fill-opacity="0.83"/>
<circle cx="310.8" cy="74.1" r="0.50" fill="#9fb2dc" fill-opacity="0.69"/>
<circle cx="290.9" cy="32.6" r="0.55" fill="#9fb2dc" fill-opacity="0.57"/>
<circle cx="416.0" cy="363.4" r="0.90" fill="#f0c898" fill-opacity="0.76"/>
<circle cx="240.3" cy="302.2" r="0.60" fill="#d8d8d8" fill-opacity="0.75"/>
<circle cx="420.9" cy="153.8" r="0.40" fill="#f0c898" fill-opacity="0.80"/>
<circle cx="399.1" cy="332.8" r="0.90" fill="#9fb2dc" fill-opacity="0.63"/>
<circle cx="134.9" cy="207.4" r="0.65" fill="#aab8d8" fill-opacity="0.91"/>
<circle cx="201.9" cy="208.8" r="0.55" fill="#f0c898" fill-opacity="0.67"/>
<circle cx="484.4" cy="130.3" r="0.50" fill="#aab8d8" fill-opacity="0.65"/>
<circle cx="418.6" cy="207.2" r="0.75" fill="#c8c8c8" fill-opacity="0.83"/>
<circle cx="265.6" cy="174.1" r="0.60" fill="#aab8d8" fill-opacity="0.59"/>
<circle cx="210.0" cy="122.7" r="0.75" fill="#f0c898" fill-opacity="0.63"/>
<circle cx="354.3" cy="281.2" r="0.90" fill="#e8e0d0" fill-opacity="0.57"/>
<circle cx="349.6" cy="218.9" r="0.65" fill="#e8e0d0" fill-opacity="0.80"/>
<circle cx="253.6" cy="197.1" r="0.55" fill="#c89868" fill-opacity="0.65"/>
<circle cx="257.6" cy="263.9" r="0.50" fill="#f0c898" fill-opacity="0.64"/>
<circle cx="245.5" cy="286.4" r="0.90" fill="#ffffff" fill-opacity="0.88"/>
<circle cx="357.6" cy="154.5" r="0.50" fill="#c8d4f4" fill-opacity="0.98"/>
<circle cx="378.0" cy="97.5" r="0.50" fill="#ffffff" fill-opacity="0.91"/>
<circle cx="406.1" cy="186.6" r="0.50" fill="#c8c8c8" fill-opacity="0.84"/>
<circle cx="173.1" cy="101.6" r="0.60" fill="#d8a870" fill-opacity="0.57"/>
<circle cx="281.7" cy="319.1" r="0.50" fill="#f0c898" fill-opacity="0.99"/>
<circle cx="229.0" cy="299.4" r="0.40" fill="#aab8d8" fill-opacity="0.66"/>
<circle cx="450.6" cy="285.6" r="0.90" fill="#aab8d8" fill-opacity="0.84"/>
<circle cx="448.0" cy="273.3" r="0.90" fill="#b9c6e6" fill-opacity="0.86"/>
<circle cx="372.0" cy="193.7" r="0.55" fill="#9fb2dc" fill-opacity="0.83"/>
<circle cx="169.7" cy="180.9" r="0.60" fill="#aab8d8" fill-opacity="0.87"/>
<circle cx="191.5" cy="340.8" r="0.65" fill="#d8a870" fill-opacity="0.56"/>
<circle cx="452.7" cy="217.6" r="0.50" fill="#e8e0d0" fill-opacity="0.70"/>
<circle cx="226.8" cy="105.9" r="0.50" fill="#f0c898" fill-opacity="0.71"/>
<circle cx="448.4" cy="194.7" r="0.50" fill="#aab8d8" fill-opacity="0.76"/>
<circle cx="270.9" cy="152.3" r="0.65" fill="#b9c6e6" fill-opacity="1.00"/>
<circle cx="201.7" cy="215.9" r="0.45" fill="#aab8d8" fill-opacity="0.99"/>
<circle cx="265.5" cy="45.9" r="0.55" fill="#e0b888" fill-opacity="0.73"/>
<circle cx="138.3" cy="180.5" r="0.60" fill="#e8e0d0" fill-opacity="0.86"/>
<circle cx="264.3" cy="123.4" r="0.50" fill="#9fb2dc" fill-opacity="0.88"/>
<circle cx="483.0" cy="220.9" r="0.50" fill="#e0b888" fill-opacity="0.76"/>
<circle cx="205.2" cy="263.7" r="0.50" fill="#ffffff" fill-opacity="0.71"/>
<circle cx="370.9" cy="329.4" r="0.60" fill="#d8a870" fill-opacity="1.00"/>
<circle cx="416.0" cy="266.5" r="0.65" fill="#c8d4f4" fill-opacity="0.90"/>
<circle cx="219.0" cy="286.8" r="0.55" fill="#e0b888" fill-opacity="0.86"/>
<circle cx="312.4" cy="324.4" r="0.55" fill="#c8d4f4" fill-opacity="0.66"/>
<circle cx="245.6" cy="203.2" r="0.60" fill="#c89868" fill-opacity="0.84"/>
<circle cx="378.5" cy="159.6" r="0.55" fill="#e0b888" fill-opacity="0.58"/>
<circle cx="425.0" cy="77.0" r="0.55" fill="#e8e0d0" fill-opacity="0.81"/>
<circle cx="377.8" cy="102.8" r="0.45" fill="#e8e0d0" fill-opacity="0.68"/>
<circle cx="359.6" cy="240.0" r="0.50" fill="#ffffff" fill-opacity="0.90"/>
<circle cx="262.2" cy="81.6" r="0.60" fill="#f0c898" fill-opacity="0.63"/>
<circle cx="464.8" cy="251.1" r="0.45" fill="#e8e0d0" fill-opacity="0.96"/>
<circle cx="337.3" cy="261.6" r="0.55" fill="#b9c6e6" fill-opacity="0.77"/>
<circle cx="445.5" cy="274.5" r="0.45" fill="#f0c898" fill-opacity="0.60"/>
<circle cx="289.2" cy="332.5" r="0.65" fill="#d8a870" fill-opacity="0.80"/>
<circle cx="313.5" cy="361.6" r="0.65" fill="#b9c6e6" fill-opacity="0.77"/>
<circle cx="334.0" cy="345.8" r="0.40" fill="#ffffff" fill-opacity="0.93"/>
<circle cx="307.4" cy="234.1" r="0.55" fill="#d8a870" fill-opacity="0.72"/>
<circle cx="289.1" cy="382.1" r="0.45" fill="#ffffff" fill-opacity="0.84"/>
<circle cx="369.9" cy="35.4" r="0.90" fill="#d8d8d8" fill-opacity="0.86"/>
<circle cx="479.8" cy="147.7" r="0.45" fill="#f0c898" fill-opacity="0.77"/>
<circle cx="415.0" cy="78.6" r="0.50" fill="#aab8d8" fill-opacity="0.74"/>
<circle cx="378.5" cy="151.8" r="0.75" fill="#f0c898" fill-opacity="0.90"/>
<circle cx="211.7" cy="186.7" r="0.60" fill="#9fb2dc" fill-opacity="0.80"/>
<circle cx="440.8" cy="133.8" r="0.65" fill="#e0b888" fill-opacity="0.70"/>
<circle cx="261.6" cy="100.5" r="0.65" fill="#c8c8c8" fill-opacity="0.70"/>
<circle cx="251.3" cy="136.1" r="0.90" fill="#e8e0d0" fill-opacity="0.59"/>
<circle cx="339.5" cy="175.8" r="0.90" fill="#d8d8d8" fill-opacity="0.73"/>
<circle cx="439.1" cy="201.5" r="0.40" fill="#f0c898" fill-opacity="0.96"/>
<circle cx="360.9" cy="254.2" r="0.90" fill="#e8e0d0" fill-opacity="0.59"/>
<circle cx="148.0" cy="260.5" r="0.50" fill="#c8c8c8" fill-opacity="0.85"/>
<circle cx="456.6" cy="181.6" r="0.45" fill="#e8e0d0" fill-opacity="0.56"/>
<circle cx="248.4" cy="289.0" r="0.55" fill="#ffffff" fill-opacity="0.74"/>
<circle cx="251.8" cy="185.0" r="0.90" fill="#d8d8d8" fill-opacity="0.77"/>
<circle cx="327.5" cy="331.6" r="0.60" fill="#c89868" fill-opacity="0.86"/>
<circle cx="283.8" cy="49.8" r="0.60" fill="#c89868" fill-opacity="0.82"/>
<circle cx="310.2" cy="178.2" r="0.45" fill="#c8c8c8" fill-opacity="0.84"/>
<circle cx="212.3" cy="81.3" r="0.40" fill="#e0b888" fill-opacity="0.55"/>
<circle cx="387.7" cy="70.1" r="0.45" fill="#b9c6e6" fill-opacity="0.94"/>
<circle cx="400.9" cy="114.9" r="0.50" fill="#d8d8d8" fill-opacity="0.71"/>
<circle cx="411.3" cy="283.3" r="0.50" fill="#aab8d8" fill-opacity="0.89"/>
<circle cx="242.3" cy="232.2" r="0.65" fill="#d8a870" fill-opacity="0.85"/>
<circle cx="388.7" cy="254.8" r="0.60" fill="#9fb2dc" fill-opacity="0.69"/>
<circle cx="356.5" cy="381.1" r="0.65" fill="#c89868" fill-opacity="0.58"/>
<circle cx="270.0" cy="238.7" r="0.65" fill="#d8a870" fill-opacity="0.85"/>
<circle cx="187.2" cy="321.4" r="0.55" fill="#e8e0d0" fill-opacity="0.62"/>
<circle cx="431.6" cy="202.2" r="0.65" fill="#9fb2dc" fill-opacity="0.90"/>
<circle cx="344.2" cy="133.6" r="0.40" fill="#c89868" fill-opacity="0.99"/>
<circle cx="394.9" cy="332.6" r="0.55" fill="#c89868" fill-opacity="0.88"/>
<circle cx="443.0" cy="242.3" r="0.50" fill="#e0b888" fill-opacity="0.72"/>
<circle cx="273.2" cy="311.8" r="0.50" fill="#d8a870" fill-opacity="0.68"/>
<circle cx="290.5" cy="243.0" r="0.40" fill="#9fb2dc" fill-opacity="0.92"/>
<circle cx="435.3" cy="347.4" r="0.90" fill="#ffffff" fill-opacity="0.67"/>
<circle cx="449.9" cy="325.0" r="0.65" fill="#c8d4f4" fill-opacity="0.79"/>
<circle cx="334.2" cy="205.1" r="0.60" fill="#b9c6e6" fill-opacity="0.90"/>
<circle cx="248.4" cy="46.2" r="0.60" fill="#d8a870" fill-opacity="0.87"/>
<circle cx="477.8" cy="242.9" r="0.40" fill="#e0b888" fill-opacity="0.76"/>
<circle cx="420.5" cy="111.4" r="0.90" fill="#f0c898" fill-opacity="0.95"/>
<circle cx="462.6" cy="218.9" r="0.65" fill="#f0c898" fill-opacity="0.82"/>
<circle cx="203.7" cy="96.3" r="0.50" fill="#aab8d8" fill-opacity="0.68"/>
<circle cx="348.3" cy="158.3" r="0.75" fill="#ffffff" fill-opacity="0.66"/>
<circle cx="476.5" cy="208.3" r="0.45" fill="#c8d4f4" fill-opacity="0.83"/>
<circle cx="426.2" cy="82.9" r="0.90" fill="#d8d8d8" fill-opacity="0.71"/>
<circle cx="326.5" cy="32.5" r="0.40" fill="#b9c6e6" fill-opacity="1.00"/>
<circle cx="455.5" cy="205.7" r="0.90" fill="#b9c6e6" fill-opacity="0.67"/>
<circle cx="423.2" cy="183.3" r="0.65" fill="#c89868" fill-opacity="0.92"/>
<circle cx="152.3" cy="232.1" r="0.65" fill="#d8a870" fill-opacity="0.98"/>
<circle cx="355.8" cy="172.6" r="0.45" fill="#aab8d8" fill-opacity="0.98"/>
<circle cx="229.0" cy="234.8" r="0.45" fill="#e8e0d0" fill-opacity="0.78"/>
<circle cx="201.3" cy="340.9" r="0.55" fill="#b9c6e6" fill-opacity="1.00"/>
<circle cx="228.5" cy="155.7" r="0.75" fill="#d8d8d8" fill-opacity="0.93"/>
<circle cx="397.3" cy="265.4" r="0.65" fill="#d8d8d8" fill-opacity="0.60"/>
<circle cx="207.3" cy="303.1" r="0.90" fill="#c89868" fill-opacity="0.75"/>
<circle cx="376.0" cy="199.9" r="0.55" fill="#9fb2dc" fill-opacity="0.73"/>
<circle cx="272.8" cy="166.0" r="0.65" fill="#b9c6e6" fill-opacity="0.91"/>
<circle cx="307.4" cy="364.3" r="0.40" fill="#ffffff" fill-opacity="0.97"/>
<circle cx="185.3" cy="191.2" r="0.45" fill="#e0b888" fill-opacity="0.93"/>
<circle cx="367.1" cy="193.1" r="0.55" fill="#c8d4f4" fill-opacity="0.92"/>
<circle cx="310.9" cy="258.5" r="0.50" fill="#c8d4f4" fill-opacity="0.65"/>
<circle cx="154.4" cy="290.3" r="0.75" fill="#ffffff" fill-opacity="0.75"/>
<circle cx="188.9" cy="180.4" r="0.50" fill="#ffffff" fill-opacity="0.56"/>
<circle cx="345.7" cy="135.1" r="0.50" fill="#9fb2dc" fill-opacity="0.77"/>
<circle cx="251.6" cy="360.8" r="0.45" fill="#ffffff" fill-opacity="0.99"/>
<circle cx="381.9" cy="103.4" r="0.65" fill="#9fb2dc" fill-opacity="0.60"/>
<circle cx="294.0" cy="122.1" r="0.50" fill="#b9c6e6" fill-opacity="0.59"/>
<circle cx="241.0" cy="358.2" r="0.40" fill="#aab8d8" fill-opacity="0.99"/>
<circle cx="187.0" cy="262.8" r="0.65" fill="#f0c898" fill-opacity="0.70"/>
<circle cx="442.9" cy="220.7" r="0.50" fill="#c8d4f4" fill-opacity="0.75"/>
<circle cx="345.8" cy="76.2" r="0.50" fill="#f0c898" fill-opacity="0.90"/>
<circle cx="398.0" cy="98.0" r="0.45" fill="#c8c8c8" fill-opacity="0.95"/>
<circle cx="405.2" cy="308.0" r="0.50" fill="#b9c6e6" fill-opacity="0.61"/>
<circle cx="382.5" cy="258.6" r="0.50" fill="#c89868" fill-opacity="0.69"/>
<circle cx="326.6" cy="337.7" r="0.40" fill="#f0c898" fill-opacity="0.91"/>
<circle cx="258.0" cy="338.0" r="0.65" fill="#c8c8c8" fill-opacity="0.56"/>
<circle cx="471.9" cy="202.1" r="0.55" fill="#b9c6e6" fill-opacity="0.63"/>
<circle cx="442.7" cy="161.4" r="0.50" fill="#aab8d8" fill-opacity="0.72"/>
<circle cx="326.7" cy="190.6" r="0.75" fill="#c8c8c8" fill-opacity="0.60"/>
<circle cx="399.1" cy="328.6" r="0.55" fill="#aab8d8" fill-opacity="0.94"/>
<circle cx="347.7" cy="358.9" r="0.55" fill="#c8c8c8" fill-opacity="0.98"/>
<circle cx="317.4" cy="215.8" r="0.75" fill="#f0c898" fill-opacity="0.61"/>
<circle cx="223.9" cy="57.8" r="0.90" fill="#ffffff" fill-opacity="0.63"/>
<circle cx="249.3" cy="231.4" r="0.40" fill="#d8d8d8" fill-opacity="0.59"/>
<circle cx="393.3" cy="97.4" r="0.40" fill="#c89868" fill-opacity="0.84"/>
<circle cx="305.9" cy="113.5" r="0.65" fill="#c8c8c8" fill-opacity="0.71"/>
<circle cx="234.9" cy="197.7" r="0.90" fill="#f0c898" fill-opacity="0.89"/>
<circle cx="462.3" cy="226.3" r="0.50" fill="#b9c6e6" fill-opacity="0.62"/>
<circle cx="346.4" cy="302.5" r="0.50" fill="#d8d8d8" fill-opacity="0.97"/>
<circle cx="277.9" cy="181.2" r="0.90" fill="#f0c898" fill-opacity="0.57"/>
<circle cx="268.4" cy="173.9" r="0.55" fill="#aab8d8" fill-opacity="0.75"/>
<circle cx="325.8" cy="381.1" r="0.55" fill="#b9c6e6" fill-opacity="0.94"/>
<circle cx="254.0" cy="99.5" r="0.40" fill="#b9c6e6" fill-opacity="0.61"/>
<circle cx="481.8" cy="260.4" r="0.40" fill="#d8d8d8" fill-opacity="0.94"/>
<circle cx="364.3" cy="366.3" r="0.90" fill="#9fb2dc" fill-opacity="0.83"/>
<circle cx="262.6" cy="86.9" r="0.40" fill="#c89868" fill-opacity="0.98"/>
<circle cx="164.7" cy="244.4" r="0.50" fill="#d8a870" fill-opacity="0.61"/>
<circle cx="182.2" cy="134.0" r="0.60" fill="#c89868" fill-opacity="0.68"/>
<circle cx="223.8" cy="57.5" r="0.75" fill="#9fb2dc" fill-opacity="0.93"/>
<circle cx="360.2" cy="236.9" r="0.60" fill="#b9c6e6" fill-opacity="0.80"/>
<circle cx="269.8" cy="356.6" r="0.55" fill="#c89868" fill-opacity="0.77"/>
<circle cx="257.4" cy="95.0" r="0.75" fill="#e0b888" fill-opacity="0.99"/>
<circle cx="280.8" cy="368.6" r="0.50" fill="#b9c6e6" fill-opacity="0.70"/>
<circle cx="254.4" cy="125.2" r="0.50" fill="#9fb2dc" fill-opacity="0.58"/>
<circle cx="141.4" cy="229.8" r="0.90" fill="#c8d4f4" fill-opacity="0.75"/>
<circle cx="156.4" cy="169.1" r="0.65" fill="#c8d4f4" fill-opacity="0.88"/>
<circle cx="173.9" cy="108.6" r="0.50" fill="#e0b888" fill-opacity="0.70"/>
<circle cx="264.4" cy="276.0" r="0.90" fill="#c89868" fill-opacity="0.93"/>
<circle cx="438.8" cy="217.4" r="0.65" fill="#9fb2dc" fill-opacity="0.90"/>
<circle cx="396.9" cy="365.1" r="0.50" fill="#e0b888" fill-opacity="0.94"/>
<circle cx="351.2" cy="210.0" r="0.90" fill="#ffffff" fill-opacity="0.74"/>
<circle cx="424.8" cy="349.5" r="0.90" fill="#c8c8c8" fill-opacity="0.72"/>
<circle cx="301.5" cy="195.1" r="0.55" fill="#9fb2dc" fill-opacity="0.71"/>
<circle cx="329.0" cy="246.3" r="0.55" fill="#d8d8d8" fill-opacity="0.90"/>
<circle cx="449.3" cy="210.6" r="0.65" fill="#9fb2dc" fill-opacity="0.63"/>
<circle cx="246.4" cy="78.7" r="0.90" fill="#e0b888" fill-opacity="0.81"/>
<circle cx="253.8" cy="338.5" r="0.50" fill="#c8d4f4" fill-opacity="0.64"/>
<circle cx="291.9" cy="363.5" r="0.40" fill="#d8d8d8" fill-opacity="0.57"/>
<circle cx="343.5" cy="209.8" r="0.75" fill="#9fb2dc" fill-opacity="0.79"/>
<circle cx="325.7" cy="279.7" r="0.60" fill="#d8a870" fill-opacity="0.71"/>
<circle cx="354.5" cy="155.4" r="0.40" fill="#e8e0d0" fill-opacity="0.58"/>
<circle cx="218.6" cy="177.1" r="0.75" fill="#e0b888" fill-opacity="0.84"/>
<circle cx="203.3" cy="181.5" r="0.60" fill="#d8a870" fill-opacity="0.90"/>
<circle cx="467.8" cy="243.3" r="0.75" fill="#aab8d8" fill-opacity="0.92"/>
<circle cx="196.8" cy="143.1" r="0.45" fill="#9fb2dc" fill-opacity="0.78"/>
<circle cx="389.9" cy="330.0" r="0.75" fill="#e0b888" fill-opacity="0.83"/>
<circle cx="328.2" cy="328.4" r="0.50" fill="#f0c898" fill-opacity="0.95"/>
<circle cx="286.7" cy="47.2" r="0.90" fill="#c89868" fill-opacity="0.60"/>
<circle cx="345.3" cy="259.7" r="0.40" fill="#aab8d8" fill-opacity="0.74"/>
<circle cx="426.3" cy="138.9" r="0.75" fill="#d8d8d8" fill-opacity="0.96"/>
<circle cx="281.2" cy="61.4" r="0.40" fill="#e8e0d0" fill-opacity="0.56"/>
<circle cx="198.5" cy="310.9" r="0.90" fill="#9fb2dc" fill-opacity="0.94"/>
<circle cx="466.5" cy="216.1" r="0.50" fill="#c89868" fill-opacity="0.64"/>
<circle cx="357.1" cy="78.9" r="0.75" fill="#f0c898" fill-opacity="0.60"/>
<circle cx="327.7" cy="331.0" r="0.90" fill="#e0b888" fill-opacity="0.91"/>
<circle cx="420.0" cy="144.9" r="0.50" fill="#c8d4f4" fill-opacity="0.67"/>
<circle cx="145.5" cy="258.7" r="0.90" fill="#c8c8c8" fill-opacity="0.71"/>
<circle cx="300.6" cy="168.3" r="0.40" fill="#b9c6e6" fill-opacity="0.95"/>
<circle cx="350.1" cy="381.8" r="0.65" fill="#d8d8d8" fill-opacity="0.83"/>
<circle cx="250.4" cy="359.2" r="0.65" fill="#9fb2dc" fill-opacity="0.74"/>
<circle cx="227.0" cy="354.7" r="0.45" fill="#b9c6e6" fill-opacity="0.85"/>
<circle cx="384.4" cy="242.4" r="0.60" fill="#9fb2dc" fill-opacity="0.73"/>
<circle cx="196.5" cy="165.8" r="0.40" fill="#9fb2dc" fill-opacity="0.73"/>
<circle cx="268.3" cy="149.4" r="0.60" fill="#c8d4f4" fill-opacity="0.73"/>
<circle cx="440.5" cy="155.5" r="0.50" fill="#e0b888" fill-opacity="0.64"/>
<circle cx="238.8" cy="113.0" r="0.40" fill="#9fb2dc" fill-opacity="0.85"/>
<circle cx="260.3" cy="82.8" r="0.50" fill="#c8c8c8" fill-opacity="0.64"/>
<circle cx="336.0" cy="317.7" r="0.75" fill="#d8a870" fill-opacity="0.76"/>
<circle cx="429.0" cy="114.1" r="0.55" fill="#c8d4f4" fill-opacity="0.65"/>
<circle cx="284.0" cy="258.9" r="0.90" fill="#b9c6e6" fill-opacity="0.68"/>
<circle cx="310.4" cy="100.9" r="0.65" fill="#e8e0d0" fill-opacity="0.61"/>
<circle cx="396.1" cy="121.8" r="0.65" fill="#c89868" fill-opacity="1.00"/>
<circle cx="332.2" cy="175.1" r="0.75" fill="#b9c6e6" fill-opacity="0.61"/>
<circle cx="412.6" cy="277.0" r="0.45" fill="#f0c898" fill-opacity="0.93"/>
<circle cx="407.1" cy="309.3" r="0.40" fill="#e8e0d0" fill-opacity="0.87"/>
<circle cx="397.7" cy="283.2" r="0.50" fill="#c8d4f4" fill-opacity="0.63"/>
<circle cx="415.4" cy="96.5" r="0.55" fill="#c8c8c8" fill-opacity="0.65"/>
<circle cx="180.2" cy="291.4" r="0.55" fill="#c8d4f4" fill-opacity="0.73"/>
<circle cx="471.4" cy="313.1" r="0.50" fill="#9fb2dc" fill-opacity="0.63"/>
<circle cx="269.7" cy="322.2" r="0.55" fill="#e0b888" fill-opacity="0.56"/>
<circle cx="395.1" cy="196.9" r="0.60" fill="#c8d4f4" fill-opacity="0.96"/>
<circle cx="169.6" cy="133.2" r="0.55" fill="#c89868" fill-opacity="0.88"/>
<circle cx="207.0" cy="137.5" r="0.60" fill="#aab8d8" fill-opacity="0.57"/>
<circle cx="249.0" cy="262.3" r="0.50" fill="#c89868" fill-opacity="0.93"/>
<circle cx="345.4" cy="291.4" r="0.55" fill="#e0b888" fill-opacity="0.85"/>
<circle cx="347.3" cy="372.9" r="0.45" fill="#e8e0d0" fill-opacity="0.68"/>
<circle cx="359.2" cy="42.4" r="0.50" fill="#e8e0d0" fill-opacity="0.60"/>
<circle cx="427.7" cy="103.0" r="0.55" fill="#aab8d8" fill-opacity="0.96"/>
<circle cx="288.5" cy="301.5" r="0.90" fill="#b9c6e6" fill-opacity="0.68"/>
<circle cx="291.0" cy="370.8" r="0.75" fill="#aab8d8" fill-opacity="0.86"/>
<circle cx="445.4" cy="257.7" r="0.75" fill="#d8d8d8" fill-opacity="0.85"/>
<circle cx="209.9" cy="275.2" r="0.50" fill="#d8a870" fill-opacity="0.89"/>
<circle cx="433.0" cy="122.0" r="0.75" fill="#ffffff" fill-opacity="0.99"/>
<circle cx="370.5" cy="227.1" r="0.50" fill="#d8d8d8" fill-opacity="0.63"/>
<circle cx="262.5" cy="59.2" r="0.55" fill="#ffffff" fill-opacity="0.61"/>
<circle cx="396.3" cy="274.2" r="0.50" fill="#aab8d8" fill-opacity="0.66"/>
<circle cx="325.0" cy="190.4" r="0.55" fill="#aab8d8" fill-opacity="0.68"/>
<circle cx="342.8" cy="148.9" r="0.45" fill="#f0c898" fill-opacity="0.74"/>
<circle cx="483.4" cy="276.7" r="0.50" fill="#c89868" fill-opacity="0.99"/>
<circle cx="445.6" cy="175.9" r="0.50" fill="#c8c8c8" fill-opacity="0.86"/>
<circle cx="137.9" cy="205.8" r="0.40" fill="#d8d8d8" fill-opacity="0.95"/>
<circle cx="246.4" cy="65.9" r="0.55" fill="#d8a870" fill-opacity="0.98"/>
<circle cx="193.3" cy="190.4" r="0.90" fill="#c8d4f4" fill-opacity="0.68"/>
<circle cx="340.7" cy="41.8" r="0.65" fill="#d8a870" fill-opacity="0.59"/>
<circle cx="343.0" cy="65.3" r="0.65" fill="#e0b888" fill-opacity="0.77"/>
<circle cx="424.9" cy="144.5" r="0.55" fill="#c8c8c8" fill-opacity="0.84"/>
<circle cx="366.8" cy="372.7" r="0.55" fill="#e8e0d0" fill-opacity="0.66"/>
<circle cx="421.4" cy="337.1" r="0.55" fill="#c8d4f4" fill-opacity="0.63"/>
<circle cx="370.7" cy="339.4" r="0.50" fill="#c8c8c8" fill-opacity="0.90"/>
<circle cx="442.2" cy="300.9" r="0.55" fill="#e0b888" fill-opacity="0.63"/>
<circle cx="440.3" cy="143.9" r="0.55" fill="#ffffff" fill-opacity="0.80"/>
<circle cx="270.7" cy="334.1" r="0.50" fill="#d8d8d8" fill-opacity="0.57"/>
<circle cx="344.2" cy="258.5" r="0.60" fill="#d8d8d8" fill-opacity="0.98"/>
<circle cx="317.2" cy="210.6" r="0.50" fill="#9fb2dc" fill-opacity="0.82"/>
<circle cx="366.4" cy="77.6" r="0.50" fill="#ffffff" fill-opacity="0.61"/>
<circle cx="370.2" cy="174.1" r="0.40" fill="#d8a870" fill-opacity="0.77"/>
<circle cx="214.5" cy="163.4" r="0.40" fill="#c89868" fill-opacity="0.93"/>
<circle cx="426.0" cy="183.1" r="0.55" fill="#c8c8c8" fill-opacity="0.85"/>
<circle cx="324.7" cy="181.5" r="0.55" fill="#c8c8c8" fill-opacity="0.75"/>
<circle cx="381.1" cy="332.1" r="0.50" fill="#e0b888" fill-opacity="0.68"/>
<circle cx="298.2" cy="234.4" r="0.55" fill="#c89868" fill-opacity="0.64"/>
<circle cx="164.9" cy="145.2" r="0.65" fill="#e0b888" fill-opacity="0.99"/>
<circle cx="363.9" cy="326.5" r="0.40" fill="#aab8d8" fill-opacity="0.85"/>
<circle cx="359.9" cy="135.3" r="0.90" fill="#e0b888" fill-opacity="0.98"/>
<circle cx="312.1" cy="265.6" r="0.55" fill="#c8d4f4" fill-opacity="0.79"/>
<circle cx="369.1" cy="340.3" r="0.50" fill="#e8e0d0" fill-opacity="0.88"/>
<circle cx="390.5" cy="79.5" r="0.90" fill="#c8d4f4" fill-opacity="0.80"/>
<circle cx="484.2" cy="158.7" r="0.50" fill="#c89868" fill-opacity="0.75"/>
<circle cx="230.4" cy="109.3" r="0.50" fill="#f0c898" fill-opacity="0.89"/>
<circle cx="215.6" cy="336.3" r="0.45" fill="#b9c6e6" fill-opacity="0.79"/>
<circle cx="226.9" cy="206.8" r="0.75" fill="#d8a870" fill-opacity="0.65"/>
<circle cx="346.3" cy="66.8" r="0.75" fill="#c89868" fill-opacity="0.81"/>
<circle cx="450.1" cy="277.6" r="0.65" fill="#ffffff" fill-opacity="0.94"/>
<circle cx="338.1" cy="290.6" r="0.45" fill="#e8e0d0" fill-opacity="1.00"/>
<circle cx="401.7" cy="62.8" r="0.60" fill="#f0c898" fill-opacity="0.63"/>
<circle cx="490.4" cy="234.2" r="0.45" fill="#ffffff" fill-opacity="0.72"/>
<circle cx="363.5" cy="175.2" r="0.40" fill="#c8d4f4" fill-opacity="0.57"/>
<circle cx="304.3" cy="69.6" r="0.50" fill="#e0b888" fill-opacity="0.96"/>
<circle cx="208.3" cy="67.5" r="0.55" fill="#ffffff" fill-opacity="0.72"/>
<circle cx="446.3" cy="323.9" r="0.40" fill="#9fb2dc" fill-opacity="0.61"/>
<circle cx="272.1" cy="299.1" r="0.55" fill="#aab8d8" fill-opacity="0.77"/>
<circle cx="437.1" cy="156.3" r="0.55" fill="#f0c898" fill-opacity="0.70"/>
<circle cx="357.6" cy="37.5" r="0.50" fill="#9fb2dc" fill-opacity="0.71"/>
<circle cx="501.1" cy="188.4" r="0.40" fill="#d8a870" fill-opacity="0.60"/>
<circle cx="431.2" cy="93.7" r="0.75" fill="#9fb2dc" fill-opacity="0.94"/>
<circle cx="382.4" cy="335.9" r="0.90" fill="#9fb2dc" fill-opacity="0.79"/>
<circle cx="389.8" cy="325.4" r="0.65" fill="#d8d8d8" fill-opacity="0.56"/>
<circle cx="503.2" cy="206.0" r="0.65" fill="#d8d8d8" fill-opacity="0.91"/>
<circle cx="437.7" cy="277.6" r="0.60" fill="#d8a870" fill-opacity="0.99"/>
<circle cx="391.1" cy="191.7" r="0.50" fill="#c89868" fill-opacity="0.78"/>
<circle cx="267.6" cy="221.3" r="0.55" fill="#ffffff" fill-opacity="0.82"/>
<circle cx="267.6" cy="198.8" r="0.90" fill="#d8a870" fill-opacity="0.72"/>
<circle cx="348.7" cy="149.0" r="0.40" fill="#b9c6e6" fill-opacity="0.76"/>
<circle cx="187.5" cy="274.4" r="0.55" fill="#e0b888" fill-opacity="0.67"/>
<circle cx="319.3" cy="122.3" r="0.90" fill="#c89868" fill-opacity="0.79"/>
<circle cx="146.0" cy="233.4" r="0.45" fill="#b9c6e6" fill-opacity="0.90"/>
<circle cx="368.8" cy="260.9" r="0.55" fill="#9fb2dc" fill-opacity="0.91"/>
<circle cx="221.9" cy="321.2" r="0.50" fill="#e8e0d0" fill-opacity="0.58"/>
<circle cx="491.5" cy="151.8" r="0.55" fill="#f0c898" fill-opacity="0.93"/>
<circle cx="224.5" cy="349.5" r="0.60" fill="#c8d4f4" fill-opacity="0.58"/>
<circle cx="258.7" cy="145.0" r="0.65" fill="#f0c898" fill-opacity="0.72"/>
<circle cx="223.9" cy="112.2" r="0.55" fill="#ffffff" fill-opacity="0.61"/>
<circle cx="301.9" cy="190.5" r="0.90" fill="#9fb2dc" fill-opacity="0.97"/>
<circle cx="351.6" cy="78.3" r="0.55" fill="#9fb2dc" fill-opacity="0.88"/>
<circle cx="338.4" cy="373.5" r="0.55" fill="#c8c8c8" fill-opacity="0.96"/>
<circle cx="350.3" cy="54.6" r="0.50" fill="#9fb2dc" fill-opacity="0.81"/>
<circle cx="421.4" cy="184.1" r="0.45" fill="#d8a870" fill-opacity="0.69"/>
<circle cx="336.6" cy="307.0" r="0.55" fill="#b9c6e6" fill-opacity="0.87"/>
<circle cx="214.5" cy="173.4" r="0.50" fill="#c89868" fill-opacity="0.68"/>
<circle cx="320.0" cy="61.8" r="0.50" fill="#aab8d8" fill-opacity="0.58"/>
<circle cx="347.4" cy="292.3" r="0.40" fill="#b9c6e6" fill-opacity="0.67"/>
<circle cx="252.9" cy="347.6" r="0.40" fill="#e8e0d0" fill-opacity="0.77"/>
<circle cx="360.1" cy="322.5" r="0.50" fill="#d8d8d8" fill-opacity="0.94"/>
<circle cx="361.3" cy="313.5" r="0.90" fill="#e0b888" fill-opacity="0.67"/>
<circle cx="305.7" cy="29.9" r="0.55" fill="#c89868" fill-opacity="0.84"/>
<circle cx="249.9" cy="179.2" r="0.55" fill="#ffffff" fill-opacity="0.59"/>
<circle cx="191.4" cy="77.9" r="0.45" fill="#c8d4f4" fill-opacity="0.92"/>
<circle cx="290.7" cy="225.2" r="0.90" fill="#f0c898" fill-opacity="0.62"/>
<circle cx="498.4" cy="238.7" r="0.50" fill="#aab8d8" fill-opacity="0.83"/>
<circle cx="435.9" cy="202.5" r="0.40" fill="#e8e0d0" fill-opacity="0.69"/>
<circle cx="301.9" cy="128.3" r="0.75" fill="#f0c898" fill-opacity="0.97"/>
<circle cx="310.3" cy="268.6" r="0.55" fill="#ffffff" fill-opacity="1.00"/>
<circle cx="218.2" cy="306.3" r="0.45" fill="#d8d8d8" fill-opacity="0.83"/>
<circle cx="178.8" cy="226.9" r="0.50" fill="#f0c898" fill-opacity="0.90"/>
<circle cx="229.7" cy="250.3" r="0.50" fill="#ffffff" fill-opacity="0.94"/>
<circle cx="451.6" cy="314.6" r="0.75" fill="#d8d8d8" fill-opacity="0.71"/>
<circle cx="397.3" cy="189.1" r="0.65" fill="#b9c6e6" fill-opacity="0.84"/>
<circle cx="261.4" cy="322.6" r="0.65" fill="#b9c6e6" fill-opacity="0.70"/>
<circle cx="406.1" cy="49.1" r="0.60" fill="#e8e0d0" fill-opacity="0.94"/>
<circle cx="155.6" cy="234.7" r="0.60" fill="#e0b888" fill-opacity="0.98"/>
<circle cx="366.6" cy="108.2" r="0.55" fill="#d8d8d8" fill-opacity="0.67"/>
<circle cx="294.7" cy="110.9" r="0.50" fill="#c8d4f4" fill-opacity="0.89"/>
<circle cx="372.4" cy="135.8" r="0.65" fill="#b9c6e6" fill-opacity="0.99"/>
<circle cx="427.5" cy="202.4" r="0.55" fill="#ffffff" fill-opacity="0.92"/>
<circle cx="238.4" cy="148.1" r="0.65" fill="#b9c6e6" fill-opacity="0.62"/>
<circle cx="387.3" cy="247.1" r="0.65" fill="#b9c6e6" fill-opacity="0.81"/>
<circle cx="461.7" cy="102.9" r="0.55" fill="#d8d8d8" fill-opacity="0.90"/>
<circle cx="454.5" cy="92.6" r="0.50" fill="#9fb2dc" fill-opacity="0.86"/>
<circle cx="432.8" cy="81.3" r="0.40" fill="#ffffff" fill-opacity="0.96"/>
<circle cx="189.4" cy="298.6" r="0.45" fill="#ffffff" fill-opacity="0.76"/>
<circle cx="281.0" cy="178.9" r="0.60" fill="#c8d4f4" fill-opacity="0.99"/>
<circle cx="428.0" cy="281.3" r="0.40" fill="#ffffff" fill-opacity="0.78"/>
<circle cx="219.5" cy="184.9" r="0.45" fill="#aab8d8" fill-opacity="0.56"/>
<circle cx="314.6" cy="75.3" r="0.60" fill="#d8d8d8" fill-opacity="0.63"/>
<circle cx="388.3" cy="79.8" r="0.75" fill="#f0c898" fill-opacity="1.00"/>
<circle cx="330.4" cy="337.1" r="0.45" fill="#c8d4f4" fill-opacity="0.99"/>
<circle cx="232.7" cy="146.0" r="0.40" fill="#e8e0d0" fill-opacity="0.75"/>
<circle cx="238.3" cy="147.8" r="0.60" fill="#aab8d8" fill-opacity="0.87"/>
<circle cx="281.8" cy="143.2" r="0.60" fill="#e0b888" fill-opacity="0.99"/>
<circle cx="277.3" cy="168.2" r="0.60" fill="#ffffff" fill-opacity="0.95"/>
<circle cx="369.5" cy="113.7" r="0.75" fill="#9fb2dc" fill-opacity="0.86"/>
<circle cx="440.4" cy="271.6" r="0.45" fill="#c89868" fill-opacity="0.90"/>
<circle cx="391.5" cy="145.5" r="0.65" fill="#f0c898" fill-opacity="0.85"/>
<circle cx="302.7" cy="239.7" r="0.65" fill="#aab8d8" fill-opacity="0.84"/>
<circle cx="308.4" cy="152.2" r="0.75" fill="#e0b888" fill-opacity="0.66"/>
<circle cx="367.5" cy="301.3" r="0.60" fill="#c8d4f4" fill-opacity="0.87"/>
<circle cx="279.7" cy="220.6" r="0.90" fill="#e8e0d0" fill-opacity="0.85"/>
<circle cx="253.1" cy="258.8" r="0.75" fill="#e8e0d0" fill-opacity="0.65"/>
<circle cx="361.2" cy="123.4" r="0.65" fill="#aab8d8" fill-opacity="0.71"/>
<circle cx="352.6" cy="237.1" r="0.50" fill="#c8c8c8" fill-opacity="0.97"/>
<circle cx="330.0" cy="219.7" r="0.75" fill="#ffffff" fill-opacity="0.92"/>
<circle cx="222.1" cy="88.9" r="0.65" fill="#ffffff" fill-opacity="0.84"/>
<circle cx="275.1" cy="334.3" r="0.60" fill="#c8c8c8" fill-opacity="0.73"/>
<circle cx="394.7" cy="164.4" r="0.55" fill="#c8d4f4" fill-opacity="0.85"/>
<circle cx="327.7" cy="137.3" r="0.45" fill="#9fb2dc" fill-opacity="0.73"/>
<circle cx="300.4" cy="202.7" r="0.50" fill="#f0c898" fill-opacity="0.62"/>
<circle cx="386.3" cy="161.3" r="0.75" fill="#e8e0d0" fill-opacity="0.66"/>
<circle cx="271.2" cy="151.3" r="0.60" fill="#9fb2dc" fill-opacity="0.56"/>
<circle cx="208.0" cy="237.0" r="0.40" fill="#c89868" fill-opacity="0.63"/>
<circle cx="400.5" cy="126.9" r="0.55" fill="#9fb2dc" fill-opacity="0.66"/>
<circle cx="369.9" cy="344.3" r="0.50" fill="#ffffff" fill-opacity="0.74"/>
<circle cx="428.0" cy="254.6" r="0.55" fill="#d8d8d8" fill-opacity="0.87"/>
<circle cx="273.1" cy="40.3" r="0.55" fill="#e0b888" fill-opacity="0.74"/>
<circle cx="359.3" cy="120.3" r="0.50" fill="#e0b888" fill-opacity="0.93"/>
<circle cx="181.5" cy="254.9" r="0.90" fill="#c8d4f4" fill-opacity="0.58"/>
<circle cx="208.9" cy="344.8" r="0.45" fill="#d8a870" fill-opacity="0.72"/>
<circle cx="328.9" cy="209.5" r="0.40" fill="#c8c8c8" fill-opacity="0.82"/>
<circle cx="305.4" cy="196.7" r="0.60" fill="#e0b888" fill-opacity="1.00"/>
<circle cx="281.2" cy="75.1" r="0.40" fill="#e8e0d0" fill-opacity="0.65"/>
<circle cx="207.8" cy="226.3" r="0.55" fill="#f0c898" fill-opacity="0.70"/>
<circle cx="277.4" cy="195.9" r="0.45" fill="#b9c6e6" fill-opacity="0.93"/>
<circle cx="345.7" cy="30.6" r="0.65" fill="#c8c8c8" fill-opacity="0.93"/>
<circle cx="213.5" cy="193.8" r="0.50" fill="#aab8d8" fill-opacity="0.70"/>
<circle cx="454.3" cy="229.5" r="0.60" fill="#c89868" fill-opacity="0.61"/>
<circle cx="284.7" cy="43.4" r="0.50" fill="#c8d4f4" fill-opacity="0.70"/>
<circle cx="326.1" cy="27.0" r="0.75" fill="#9fb2dc" fill-opacity="0.78"/>
<circle cx="165.5" cy="167.5" r="0.55" fill="#f0c898" fill-opacity="0.73"/>
<circle cx="462.8" cy="278.2" r="0.55" fill="#9fb2dc" fill-opacity="0.66"/>
<circle cx="274.7" cy="187.0" r="0.75" fill="#9fb2dc" fill-opacity="0.69"/>
<circle cx="182.3" cy="102.0" r="0.55" fill="#d8a870" fill-opacity="0.85"/>
<circle cx="397.4" cy="77.4" r="0.55" fill="#b9c6e6" fill-opacity="0.76"/>
<circle cx="396.3" cy="271.8" r="0.55" fill="#d8d8d8" fill-opacity="0.79"/>
<circle cx="285.4" cy="235.0" r="0.55" fill="#d8d8d8" fill-opacity="0.67"/>
<circle cx="429.4" cy="133.3" r="0.50" fill="#c89868" fill-opacity="0.82"/>
<circle cx="284.3" cy="295.5" r="0.50" fill="#b9c6e6" fill-opacity="0.58"/>
<circle cx="294.6" cy="262.6" r="0.40" fill="#ffffff" fill-opacity="0.94"/>
<circle cx="160.1" cy="246.6" r="0.50" fill="#d8d8d8" fill-opacity="0.97"/>
<circle cx="342.0" cy="322.7" r="0.65" fill="#b9c6e6" fill-opacity="0.85"/>
<circle cx="384.4" cy="134.5" r="0.50" fill="#f0c898" fill-opacity="0.93"/>
<circle cx="210.3" cy="62.3" r="0.45" fill="#b9c6e6" fill-opacity="0.90"/>
<circle cx="487.0" cy="179.1" r="0.55" fill="#aab8d8" fill-opacity="0.96"/>
<circle cx="388.5" cy="82.4" r="0.40" fill="#aab8d8" fill-opacity="0.61"/>
<circle cx="192.9" cy="190.8" r="0.50" fill="#c89868" fill-opacity="0.91"/>
<circle cx="396.3" cy="292.4" r="0.55" fill="#9fb2dc" fill-opacity="0.70"/>
<circle cx="446.3" cy="81.3" r="0.50" fill="#e0b888" fill-opacity="0.99"/>
<circle cx="255.2" cy="82.8" r="0.55" fill="#b9c6e6" fill-opacity="0.84"/>
<circle cx="391.5" cy="98.5" r="0.50" fill="#aab8d8" fill-opacity="0.63"/>
<circle cx="257.2" cy="174.1" r="0.40" fill="#c8d4f4" fill-opacity="0.60"/>
<circle cx="482.8" cy="220.6" r="0.55" fill="#d8a870" fill-opacity="0.71"/>
<circle cx="412.4" cy="209.5" r="0.45" fill="#b9c6e6" fill-opacity="0.77"/>
<circle cx="454.7" cy="247.2" r="0.75" fill="#c8c8c8" fill-opacity="0.64"/>
<circle cx="308.3" cy="310.4" r="0.50" fill="#c89868" fill-opacity="0.97"/>
<circle cx="145.4" cy="247.6" r="0.40" fill="#c8d4f4" fill-opacity="0.64"/>
<circle cx="189.9" cy="136.4" r="0.50" fill="#c8d4f4" fill-opacity="0.71"/>
<circle cx="312.2" cy="147.4" r="0.55" fill="#ffffff" fill-opacity="0.60"/>
<circle cx="442.8" cy="325.8" r="0.75" fill="#d8a870" fill-opacity="0.59"/>
<circle cx="338.5" cy="317.9" r="0.90" fill="#e0b888" fill-opacity="0.76"/>
<circle cx="145.8" cy="215.8" r="0.45" fill="#e0b888" fill-opacity="0.84"/>
<circle cx="182.4" cy="239.8" r="0.55" fill="#c8c8c8" fill-opacity="0.72"/>
<circle cx="380.0" cy="85.8" r="0.50" fill="#e8e0d0" fill-opacity="0.97"/>
<circle cx="256.7" cy="338.1" r="0.65" fill="#9fb2dc" fill-opacity="0.62"/>
<circle cx="176.9" cy="209.4" r="0.75" fill="#f0c898" fill-opacity="0.60"/>
<circle cx="307.3" cy="85.8" r="0.75" fill="#d8d8d8" fill-opacity="0.78"/>
<circle cx="269.8" cy="98.3" r="0.60" fill="#f0c898" fill-opacity="0.64"/>
<circle cx="180.6" cy="114.0" r="0.75" fill="#f0c898" fill-opacity="0.66"/>
<circle cx="394.2" cy="103.3" r="0.50" fill="#c8c8c8" fill-opacity="0.89"/>
<circle cx="190.5" cy="123.1" r="0.40" fill="#e0b888" fill-opacity="0.73"/>
<circle cx="326.0" cy="133.4" r="0.45" fill="#c8c8c8" fill-opacity="0.85"/>
<circle cx="214.3" cy="115.4" r="0.75" fill="#aab8d8" fill-opacity="0.92"/>
<circle cx="258.8" cy="61.3" r="0.50" fill="#c89868" fill-opacity="0.90"/>
<circle cx="198.3" cy="137.7" r="0.45" fill="#d8a870" fill-opacity="0.82"/>
<circle cx="201.3" cy="142.9" r="0.60" fill="#e0b888" fill-opacity="0.56"/>
<circle cx="426.7" cy="79.9" r="0.75" fill="#e8e0d0" fill-opacity="0.63"/>
<circle cx="430.0" cy="311.3" r="0.50" fill="#b9c6e6" fill-opacity="0.97"/>
<circle cx="388.5" cy="288.4" r="0.45" fill="#d8d8d8" fill-opacity="0.91"/>
<circle cx="311.8" cy="209.8" r="0.55" fill="#c8c8c8" fill-opacity="0.89"/>
<circle cx="370.0" cy="98.8" r="0.40" fill="#c8d4f4" fill-opacity="0.90"/>
<circle cx="167.7" cy="291.7" r="0.55" fill="#c89868" fill-opacity="0.62"/>
<circle cx="410.6" cy="75.0" r="0.55" fill="#d8d8d8" fill-opacity="0.89"/>
<circle cx="443.0" cy="323.2" r="0.90" fill="#ffffff" fill-opacity="0.75"/>
<circle cx="440.3" cy="316.6" r="0.75" fill="#9fb2dc" fill-opacity="0.89"/>
<circle cx="354.1" cy="268.5" r="0.45" fill="#c8c8c8" fill-opacity="0.99"/>
<circle cx="426.2" cy="118.5" r="0.50" fill="#b9c6e6" fill-opacity="0.64"/>
<circle cx="303.6" cy="112.8" r="0.65" fill="#c89868" fill-opacity="0.96"/>
<circle cx="388.2" cy="289.1" r="0.60" fill="#e8e0d0" fill-opacity="0.90"/>
<circle cx="428.5" cy="278.8" r="0.55" fill="#e0b888" fill-opacity="0.73"/>
<circle cx="165.7" cy="267.5" r="0.55" fill="#e8e0d0" fill-opacity="0.82"/>
<circle cx="444.4" cy="319.8" r="0.40" fill="#9fb2dc" fill-opacity="0.77"/>
<circle cx="435.5" cy="180.5" r="0.90" fill="#9fb2dc" fill-opacity="0.76"/>
<circle cx="258.1" cy="104.3" r="0.55" fill="#e0b888" fill-opacity="0.93"/>
<circle cx="363.7" cy="133.5" r="0.45" fill="#9fb2dc" fill-opacity="0.63"/>
<circle cx="464.2" cy="176.4" r="0.75" fill="#b9c6e6" fill-opacity="0.60"/>
<circle cx="387.4" cy="40.2" r="0.50" fill="#e0b888" fill-opacity="0.67"/>
<circle cx="489.6" cy="159.6" r="0.50" fill="#c8d4f4" fill-opacity="0.95"/>
<circle cx="360.3" cy="357.3" r="0.60" fill="#9fb2dc" fill-opacity="0.77"/>
<circle cx="488.9" cy="213.3" r="0.90" fill="#b9c6e6" fill-opacity="0.94"/>
<circle cx="493.5" cy="170.2" r="0.40" fill="#d8d8d8" fill-opacity="0.93"/>
<circle cx="171.9" cy="116.3" r="0.90" fill="#e8e0d0" fill-opacity="0.66"/>
<circle cx="264.4" cy="62.3" r="0.75" fill="#aab8d8" fill-opacity="0.94"/>
<circle cx="324.5" cy="164.9" r="0.55" fill="#e8e0d0" fill-opacity="0.74"/>
<circle cx="324.6" cy="148.0" r="0.55" fill="#9fb2dc" fill-opacity="0.71"/>
<circle cx="379.3" cy="259.9" r="0.60" fill="#f0c898" fill-opacity="0.91"/>
<circle cx="155.5" cy="268.3" r="0.65" fill="#c8d4f4" fill-opacity="0.86"/>
<circle cx="273.6" cy="140.5" r="0.75" fill="#ffffff" fill-opacity="0.88"/>
<circle cx="254.3" cy="75.8" r="0.55" fill="#ffffff" fill-opacity="0.63"/>
<circle cx="474.8" cy="213.8" r="0.60" fill="#ffffff" fill-opacity="0.89"/>
<circle cx="371.9" cy="129.3" r="0.50" fill="#9fb2dc" fill-opacity="0.90"/>
<circle cx="142.9" cy="228.7" r="0.60" fill="#e8e0d0" fill-opacity="0.59"/>
<circle cx="486.7" cy="262.7" r="0.65" fill="#aab8d8" fill-opacity="0.71"/>
<circle cx="469.2" cy="145.4" r="0.90" fill="#d8a870" fill-opacity="0.92"/>
<circle cx="428.5" cy="154.0" r="0.50" fill="#b9c6e6" fill-opacity="0.78"/>
<circle cx="408.0" cy="88.3" r="0.55" fill="#d8d8d8" fill-opacity="0.81"/>
<circle cx="267.3" cy="282.8" r="0.55" fill="#9fb2dc" fill-opacity="0.95"/>
<circle cx="309.9" cy="255.7" r="0.65" fill="#e0b888" fill-opacity="0.60"/>
<circle cx="230.1" cy="171.4" r="0.60" fill="#d8a870" fill-opacity="0.67"/>
<circle cx="300.8" cy="336.2" r="0.50" fill="#c8d4f4" fill-opacity="0.57"/>
<circle cx="237.1" cy="224.1" r="0.75" fill="#e8e0d0" fill-opacity="0.74"/>
<circle cx="161.7" cy="170.5" r="0.60" fill="#f0c898" fill-opacity="0.91"/>
<circle cx="300.6" cy="29.2" r="0.75" fill="#aab8d8" fill-opacity="0.80"/>
<circle cx="264.9" cy="374.5" r="0.55" fill="#b9c6e6" fill-opacity="0.95"/>
<circle cx="357.5" cy="332.9" r="0.45" fill="#9fb2dc" fill-opacity="0.62"/>
<circle cx="198.9" cy="293.7" r="0.45" fill="#e0b888" fill-opacity="0.73"/>
<circle cx="260.4" cy="170.8" r="0.55" fill="#c8d4f4" fill-opacity="0.94"/>
<circle cx="398.2" cy="78.2" r="0.75" fill="#e0b888" fill-opacity="0.85"/>
<circle cx="259.3" cy="49.3" r="0.60" fill="#c8c8c8" fill-opacity="0.78"/>
<circle cx="450.2" cy="273.2" r="0.90" fill="#e0b888" fill-opacity="0.73"/>
<circle cx="346.7" cy="126.7" r="0.50" fill="#ffffff" fill-opacity="0.65"/>
<circle cx="449.4" cy="113.6" r="0.45" fill="#9fb2dc" fill-opacity="0.95"/>
<circle cx="409.7" cy="330.2" r="0.60" fill="#9fb2dc" fill-opacity="0.61"/>
<circle cx="395.2" cy="286.6" r="0.90" fill="#9fb2dc" fill-opacity="0.87"/>
<circle cx="420.3" cy="249.8" r="0.75" fill="#9fb2dc" fill-opacity="0.82"/>
<circle cx="469.5" cy="139.8" r="0.55" fill="#e8e0d0" fill-opacity="0.81"/>
<circle cx="142.0" cy="217.2" r="0.45" fill="#c8d4f4" fill-opacity="0.65"/>
<circle cx="303.6" cy="309.0" r="0.65" fill="#9fb2dc" fill-opacity="0.78"/>
<circle cx="496.8" cy="244.4" r="0.90" fill="#d8d8d8" fill-opacity="0.57"/>
<circle cx="216.8" cy="259.0" r="0.55" fill="#c8d4f4" fill-opacity="0.79"/>
<circle cx="219.0" cy="231.9" r="0.50" fill="#9fb2dc" fill-opacity="0.93"/>
<circle cx="434.1" cy="224.6" r="0.40" fill="#b9c6e6" fill-opacity="0.90"/>
<circle cx="143.9" cy="212.5" r="0.60" fill="#c8d4f4" fill-opacity="0.58"/>
<circle cx="367.7" cy="294.3" r="0.90" fill="#c8c8c8" fill-opacity="0.73"/>
<circle cx="323.8" cy="243.8" r="0.50" fill="#e8e0d0" fill-opacity="0.94"/>
<circle cx="490.9" cy="147.3" r="0.55" fill="#c8c8c8" fill-opacity="0.84"/>
<circle cx="347.4" cy="185.3" r="0.90" fill="#d8a870" fill-opacity="0.64"/>
<circle cx="362.3" cy="66.4" r="0.50" fill="#9fb2dc" fill-opacity="0.89"/>
<circle cx="427.3" cy="301.2" r="0.55" fill="#b9c6e6" fill-opacity="0.80"/>
<circle cx="475.5" cy="293.6" r="0.40" fill="#c8c8c8" fill-opacity="0.71"/>
<circle cx="288.8" cy="335.6" r="0.75" fill="#9fb2dc" fill-opacity="0.80"/>
<circle cx="366.8" cy="235.1" r="0.55" fill="#c8d4f4" fill-opacity="0.69"/>
<circle cx="265.5" cy="359.2" r="0.65" fill="#c8c8c8" fill-opacity="0.70"/>
<circle cx="452.5" cy="160.2" r="0.65" fill="#d8a870" fill-opacity="1.00"/>
<circle cx="310.5" cy="330.6" r="0.50" fill="#c8c8c8" fill-opacity="0.79"/>
<circle cx="226.8" cy="169.5" r="0.55" fill="#9fb2dc" fill-opacity="0.85"/>
<circle cx="236.8" cy="328.0" r="0.75" fill="#e0b888" fill-opacity="0.90"/>
<circle cx="403.3" cy="84.7" r="0.60" fill="#ffffff" fill-opacity="0.61"/>
<circle cx="174.6" cy="295.6" r="0.75" fill="#e0b888" fill-opacity="0.56"/>
<circle cx="209.2" cy="237.9" r="0.45" fill="#c8d4f4" fill-opacity="0.70"/>
<circle cx="341.5" cy="196.6" r="0.50" fill="#d8d8d8" fill-opacity="0.66"/>
<circle cx="470.3" cy="167.1" r="0.45" fill="#c8c8c8" fill-opacity="0.82"/>
<circle cx="180.3" cy="99.2" r="0.65" fill="#c89868" fill-opacity="0.81"/>
<circle cx="370.0" cy="287.8" r="0.65" fill="#c8c8c8" fill-opacity="0.81"/>
<circle cx="400.8" cy="345.4" r="0.50" fill="#e0b888" fill-opacity="0.84"/>
<circle cx="400.0" cy="199.5" r="0.65" fill="#c89868" fill-opacity="0.61"/>
<circle cx="471.5" cy="247.7" r="0.45" fill="#aab8d8" fill-opacity="0.66"/>
<circle cx="279.2" cy="318.0" r="0.50" fill="#e8e0d0" fill-opacity="0.88"/>
<circle cx="374.3" cy="115.1" r="0.50" fill="#d8d8d8" fill-opacity="0.57"/>
<circle cx="383.2" cy="370.9" r="0.90" fill="#e0b888" fill-opacity="0.67"/>
<circle cx="414.9" cy="63.4" r="0.45" fill="#ffffff" fill-opacity="0.61"/>
<circle cx="330.1" cy="253.9" r="0.55" fill="#c8c8c8" fill-opacity="0.78"/>
<circle cx="489.2" cy="166.8" r="0.40" fill="#c8c8c8" fill-opacity="0.93"/>
<circle cx="340.1" cy="330.3" r="0.75" fill="#f0c898" fill-opacity="0.83"/>
<circle cx="354.5" cy="322.2" r="0.45" fill="#aab8d8" fill-opacity="0.57"/>
<circle cx="336.2" cy="133.0" r="0.60" fill="#e8e0d0" fill-opacity="0.55"/>
<circle cx="441.9" cy="326.7" r="0.65" fill="#b9c6e6" fill-opacity="0.60"/>
<circle cx="375.1" cy="101.9" r="0.60" fill="#c8c8c8" fill-opacity="0.83"/>
<circle cx="165.4" cy="218.1" r="0.45" fill="#c8c8c8" fill-opacity="0.88"/>
<circle cx="449.4" cy="340.4" r="0.45" fill="#c8c8c8" fill-opacity="0.72"/>
<circle cx="245.9" cy="308.4" r="0.50" fill="#d8a870" fill-opacity="0.82"/>
<circle cx="175.6" cy="282.4" r="0.90" fill="#b9c6e6" fill-opacity="0.78"/>
<circle cx="302.8" cy="176.4" r="0.90" fill="#c89868" fill-opacity="0.84"/>
<circle cx="474.2" cy="297.4" r="0.45" fill="#d8d8d8" fill-opacity="0.93"/>
<circle cx="386.6" cy="341.0" r="0.60" fill="#d8d8d8" fill-opacity="0.63"/>
<circle cx="484.0" cy="189.1" r="0.50" fill="#9fb2dc" fill-opacity="0.90"/>
<circle cx="275.5" cy="85.1" r="0.50" fill="#e8e0d0" fill-opacity="0.85"/>
<circle cx="309.4" cy="256.6" r="0.55" fill="#9fb2dc" fill-opacity="0.91"/>
<circle cx="138.2" cy="224.9" r="0.55" fill="#b9c6e6" fill-opacity="0.79"/>
<circle cx="266.0" cy="328.4" r="0.40" fill="#b9c6e6" fill-opacity="0.95"/>
<circle cx="428.9" cy="222.7" r="0.45" fill="#d8d8d8" fill-opacity="0.92"/>
<circle cx="250.0" cy="258.0" r="0.55" fill="#c8c8c8" fill-opacity="0.79"/>
<circle cx="330.8" cy="266.6" r="0.75" fill="#b9c6e6" fill-opacity="0.97"/>
<circle cx="284.9" cy="364.7" r="0.45" fill="#e8e0d0" fill-opacity="0.65"/>
<circle cx="240.2" cy="362.0" r="0.40" fill="#aab8d8" fill-opacity="0.67"/>
<circle cx="198.9" cy="187.7" r="0.50" fill="#aab8d8" fill-opacity="0.98"/>
<circle cx="239.1" cy="170.2" r="0.55" fill="#9fb2dc" fill-opacity="0.98"/>
<circle cx="371.8" cy="254.8" r="0.90" fill="#ffffff" fill-opacity="0.85"/>
<circle cx="355.7" cy="283.3" r="0.55" fill="#c8c8c8" fill-opacity="0.58"/>
<circle cx="267.8" cy="77.7" r="0.45" fill="#aab8d8" fill-opacity="0.77"/>
<circle cx="235.0" cy="311.0" r="0.50" fill="#c8c8c8" fill-opacity="0.66"/>
<circle cx="280.2" cy="284.0" r="0.50" fill="#d8a870" fill-opacity="1.00"/>
<circle cx="304.7" cy="144.8" r="0.50" fill="#d8d8d8" fill-opacity="0.72"/>
<circle cx="425.1" cy="64.4" r="0.50" fill="#c8d4f4" fill-opacity="0.85"/>
<circle cx="192.1" cy="270.0" r="0.90" fill="#9fb2dc" fill-opacity="0.85"/>
<circle cx="200.5" cy="78.2" r="0.45" fill="#d8d8d8" fill-opacity="0.72"/>
<circle cx="375.9" cy="236.7" r="0.50" fill="#d8d8d8" fill-opacity="0.58"/>
<circle cx="268.6" cy="293.6" r="0.50" fill="#c8d4f4" fill-opacity="0.90"/>
<circle cx="226.9" cy="161.0" r="0.75" fill="#e8e0d0" fill-opacity="0.60"/>
<circle cx="225.7" cy="320.9" r="0.55" fill="#e0b888" fill-opacity="0.97"/>
<circle cx="144.5" cy="266.1" r="0.50" fill="#e0b888" fill-opacity="0.93"/>
<circle cx="222.9" cy="356.9" r="0.55" fill="#d8d8d8" fill-opacity="0.57"/>
<circle cx="380.2" cy="336.0" r="0.50" fill="#9fb2dc" fill-opacity="0.56"/>
<circle cx="296.4" cy="67.9" r="0.65" fill="#f0c898" fill-opacity="0.87"/>
<circle cx="311.7" cy="89.5" r="0.50" fill="#e0b888" fill-opacity="0.75"/>
<circle cx="267.6" cy="199.3" r="0.55" fill="#f0c898" fill-opacity="0.58"/>
<circle cx="322.8" cy="204.8" r="0.50" fill="#c89868" fill-opacity="0.83"/>
<circle cx="273.3" cy="47.1" r="0.60" fill="#f0c898" fill-opacity="0.58"/>
<circle cx="327.3" cy="214.7" r="0.55" fill="#b9c6e6" fill-opacity="0.60"/>
<circle cx="310.9" cy="199.1" r="0.65" fill="#aab8d8" fill-opacity="0.61"/>
<circle cx="433.4" cy="259.5" r="0.45" fill="#b9c6e6" fill-opacity="0.68"/>
<circle cx="395.0" cy="201.5" r="0.55" fill="#ffffff" fill-opacity="0.78"/>
<circle cx="366.7" cy="326.7" r="0.40" fill="#e8e0d0" fill-opacity="0.76"/>
<circle cx="408.8" cy="224.6" r="0.50" fill="#d8a870" fill-opacity="0.85"/>
<circle cx="185.1" cy="160.4" r="0.60" fill="#c8d4f4" fill-opacity="0.88"/>
<circle cx="452.2" cy="161.6" r="0.50" fill="#aab8d8" fill-opacity="0.65"/>
<circle cx="355.7" cy="360.2" r="0.45" fill="#d8a870" fill-opacity="0.65"/>
<circle cx="146.7" cy="188.1" r="0.50" fill="#b9c6e6" fill-opacity="0.69"/>
<circle cx="250.1" cy="99.0" r="0.45" fill="#e0b888" fill-opacity="0.56"/>
<circle cx="194.7" cy="158.7" r="0.65" fill="#b9c6e6" fill-opacity="0.58"/>
<circle cx="272.3" cy="342.2" r="0.65" fill="#e8e0d0" fill-opacity="1.00"/>
<circle cx="364.4" cy="105.3" r="0.65" fill="#b9c6e6" fill-opacity="0.69"/>
<circle cx="425.1" cy="125.6" r="0.55" fill="#d8d8d8" fill-opacity="0.73"/>
<circle cx="261.0" cy="273.5" r="0.40" fill="#c89868" fill-opacity="0.72"/>
<circle cx="193.6" cy="332.8" r="0.40" fill="#ffffff" fill-opacity="0.82"/>
<circle cx="229.2" cy="193.7" r="0.75" fill="#f0c898" fill-opacity="0.87"/>
<circle cx="184.5" cy="114.2" r="0.45" fill="#9fb2dc" fill-opacity="0.98"/>
<circle cx="327.6" cy="241.1" r="0.40" fill="#ffffff" fill-opacity="0.66"/>
<circle cx="195.6" cy="242.6" r="0.65" fill="#e0b888" fill-opacity="0.66"/>
<circle cx="345.4" cy="107.7" r="0.50" fill="#aab8d8" fill-opacity="0.67"/>
<circle cx="483.7" cy="176.5" r="0.40" fill="#e0b888" fill-opacity="0.96"/>
<circle cx="241.0" cy="132.3" r="0.50" fill="#ffffff" fill-opacity="0.74"/>
<circle cx="330.2" cy="340.6" r="0.75" fill="#c89868" fill-opacity="0.60"/>
<circle cx="224.0" cy="269.6" r="0.90" fill="#e8e0d0" fill-opacity="0.91"/>
<circle cx="467.2" cy="237.0" r="0.50" fill="#aab8d8" fill-opacity="0.98"/>
<circle cx="372.7" cy="178.1" r="0.75" fill="#9fb2dc" fill-opacity="0.85"/>
<circle cx="160.6" cy="300.6" r="0.90" fill="#e8e0d0" fill-opacity="0.76"/>
<circle cx="383.3" cy="322.3" r="0.40" fill="#d8a870" fill-opacity="0.76"/>
<circle cx="385.5" cy="288.6" r="0.50" fill="#d8a870" fill-opacity="0.98"/>
<circle cx="425.6" cy="111.4" r="0.60" fill="#c8c8c8" fill-opacity="0.98"/>
<circle cx="210.4" cy="177.0" r="0.50" fill="#aab8d8" fill-opacity="0.65"/>
<circle cx="406.8" cy="158.6" r="0.65" fill="#c8d4f4" fill-opacity="0.61"/>
<circle cx="216.1" cy="104.8" r="0.55" fill="#c8c8c8" fill-opacity="0.57"/>
<circle cx="183.9" cy="175.9" r="0.60" fill="#e8e0d0" fill-opacity="0.59"/>
<circle cx="349.9" cy="375.4" r="0.90" fill="#f0c898" fill-opacity="0.71"/>
<circle cx="395.4" cy="187.4" r="0.50" fill="#d8a870" fill-opacity="0.86"/>
<circle cx="384.9" cy="315.3" r="0.60" fill="#c8d4f4" fill-opacity="0.60"/>
<circle cx="367.4" cy="133.5" r="0.75" fill="#e8e0d0" fill-opacity="0.64"/>
<circle cx="225.8" cy="245.1" r="0.50" fill="#c8d4f4" fill-opacity="0.89"/>
<circle cx="245.2" cy="119.9" r="0.45" fill="#c89868" fill-opacity="0.75"/>
<circle cx="381.0" cy="310.0" r="0.40" fill="#b9c6e6" fill-opacity="0.95"/>
<circle cx="354.8" cy="178.2" r="0.75" fill="#9fb2dc" fill-opacity="0.56"/>
<circle cx="430.3" cy="336.2" r="0.45" fill="#aab8d8" fill-opacity="0.66"/>
<circle cx="197.9" cy="89.7" r="0.50" fill="#d8d8d8" fill-opacity="0.56"/>
<circle cx="207.1" cy="199.6" r="0.45" fill="#f0c898" fill-opacity="0.71"/>
<circle cx="241.8" cy="302.9" r="0.55" fill="#c8d4f4" fill-opacity="0.57"/>
<circle cx="167.3" cy="256.9" r="0.55" fill="#ffffff" fill-opacity="0.91"/>
<circle cx="404.4" cy="151.9" r="0.65" fill="#ffffff" fill-opacity="0.63"/>
<circle cx="478.9" cy="233.3" r="0.40" fill="#ffffff" fill-opacity="0.93"/>
<circle cx="290.6" cy="134.6" r="0.40" fill="#b9c6e6" fill-opacity="0.69"/>
<circle cx="160.1" cy="200.6" r="0.45" fill="#c89868" fill-opacity="0.62"/>
<circle cx="428.6" cy="193.0" r="0.65" fill="#b9c6e6" fill-opacity="0.83"/>
<circle cx="440.1" cy="200.3" r="0.60" fill="#ffffff" fill-opacity="0.56"/>
<circle cx="445.8" cy="194.9" r="0.55" fill="#f0c898" fill-opacity="0.74"/>
<circle cx="331.6" cy="294.3" r="0.40" fill="#b9c6e6" fill-opacity="0.88"/>
<circle cx="215.5" cy="133.0" r="0.65" fill="#c89868" fill-opacity="0.64"/>
<circle cx="305.5" cy="150.9" r="0.55" fill="#e0b888" fill-opacity="0.69"/>
<circle cx="359.9" cy="58.0" r="0.40" fill="#c8d4f4" fill-opacity="0.78"/>
<circle cx="459.6" cy="196.6" r="0.50" fill="#c8d4f4" fill-opacity="0.60"/>
<circle cx="321.8" cy="218.7" r="0.55" fill="#e8e0d0" fill-opacity="0.87"/>
<circle cx="330.2" cy="313.3" r="0.45" fill="#e8e0d0" fill-opacity="0.58"/>
<circle cx="277.3" cy="204.7" r="0.55" fill="#e8e0d0" fill-opacity="0.78"/>
<circle cx="300.6" cy="341.9" r="0.60" fill="#aab8d8" fill-opacity="0.72"/>
<circle cx="299.5" cy="369.9" r="0.55" fill="#c89868" fill-opacity="0.57"/>
<circle cx="419.4" cy="57.5" r="0.55" fill="#ffffff" fill-opacity="0.57"/>
<circle cx="181.3" cy="198.1" r="0.90" fill="#d8d8d8" fill-opacity="0.68"/>
<circle cx="420.0" cy="187.5" r="0.45" fill="#ffffff" fill-opacity="0.73"/>
<circle cx="419.0" cy="75.0" r="0.45" fill="#aab8d8" fill-opacity="0.58"/>
<circle cx="194.3" cy="222.7" r="0.60" fill="#ffffff" fill-opacity="0.66"/>
<circle cx="277.2" cy="325.0" r="0.55" fill="#c8d4f4" fill-opacity="0.61"/>
<circle cx="176.8" cy="121.4" r="0.60" fill="#d8a870" fill-opacity="0.65"/>
<circle cx="202.1" cy="326.4" r="0.65" fill="#e0b888" fill-opacity="0.87"/>
<circle cx="406.3" cy="73.0" r="0.50" fill="#d8a870" fill-opacity="0.60"/>
<circle cx="435.9" cy="150.9" r="0.50" fill="#d8d8d8" fill-opacity="0.66"/>
<circle cx="307.8" cy="393.3" r="0.50" fill="#c89868" fill-opacity="0.69"/>
<circle cx="197.6" cy="301.8" r="0.55" fill="#e8e0d0" fill-opacity="0.63"/>
<circle cx="289.0" cy="330.5" r="0.50" fill="#c89868" fill-opacity="0.70"/>
<circle cx="426.2" cy="119.4" r="0.40" fill="#d8d8d8" fill-opacity="0.98"/>
<circle cx="255.0" cy="340.4" r="0.55" fill="#c8d4f4" fill-opacity="0.69"/>
<circle cx="363.1" cy="171.5" r="0.55" fill="#c8c8c8" fill-opacity="0.97"/>
<circle cx="414.6" cy="311.1" r="0.90" fill="#b9c6e6" fill-opacity="0.92"/>
<circle cx="372.9" cy="44.2" r="0.50" fill="#ffffff" fill-opacity="0.92"/>
<circle cx="227.5" cy="268.8" r="0.60" fill="#e0b888" fill-opacity="0.93"/>
<circle cx="183.0" cy="225.4" r="0.55" fill="#e8e0d0" fill-opacity="0.92"/>
<circle cx="261.7" cy="338.7" r="0.55" fill="#ffffff" fill-opacity="0.94"/>
<circle cx="335.1" cy="363.7" r="0.75" fill="#d8a870" fill-opacity="0.98"/>
<circle cx="308.2" cy="196.6" r="0.50" fill="#aab8d8" fill-opacity="0.70"/>
<circle cx="346.6" cy="64.2" r="0.70" fill="#f0c898" fill-opacity="0.72"/>
<circle cx="345.1" cy="33.6" r="0.50" fill="#b9c6e6" fill-opacity="1.00"/>
<circle cx="325.0" cy="301.9" r="0.45" fill="#e8e8e8" fill-opacity="0.94"/>
<circle cx="357.9" cy="46.3" r="0.55" fill="#e0b888" fill-opacity="0.83"/>
<circle cx="382.0" cy="78.1" r="0.60" fill="#f0c898" fill-opacity="0.97"/>
<circle cx="398.4" cy="104.8" r="0.60" fill="#e8e8e8" fill-opacity="0.87"/>
<circle cx="397.6" cy="126.2" r="0.60" fill="#f0c898" fill-opacity="0.72"/>
<circle cx="339.5" cy="271.3" r="0.80" fill="#ffffff" fill-opacity="0.98"/>
<circle cx="259.8" cy="376.3" r="0.70" fill="#f0c898" fill-opacity="0.82"/>
<circle cx="268.5" cy="357.8" r="0.55" fill="#f0c898" fill-opacity="0.86"/>
<circle cx="268.3" cy="364.4" r="0.70" fill="#ffffff" fill-opacity="0.78"/>
<circle cx="395.9" cy="89.9" r="0.50" fill="#e8e8e8" fill-opacity="0.94"/>
<circle cx="318.1" cy="280.9" r="0.50" fill="#e0b888" fill-opacity="0.89"/>
<circle cx="395.8" cy="95.1" r="0.60" fill="#e0b888" fill-opacity="0.90"/>
<circle cx="346.7" cy="227.9" r="0.55" fill="#ffffff" fill-opacity="0.85"/>
<circle cx="322.1" cy="287.1" r="0.45" fill="#ffffff" fill-opacity="0.88"/>
<circle cx="295.3" cy="353.1" r="0.55" fill="#ffffff" fill-opacity="0.92"/>
<circle cx="374.6" cy="61.1" r="0.60" fill="#e0b888" fill-opacity="0.79"/>
<circle cx="324.8" cy="271.3" r="0.50" fill="#e0b888" fill-opacity="0.73"/>
<circle cx="381.6" cy="124.0" r="0.60" fill="#ffffff" fill-opacity="0.99"/>
<circle cx="358.0" cy="92.1" r="0.45" fill="#c8d4f4" fill-opacity="0.72"/>
<circle cx="374.7" cy="182.4" r="0.55" fill="#ffffff" fill-opacity="0.85"/>
<circle cx="253.9" cy="363.3" r="0.80" fill="#f0c898" fill-opacity="0.83"/>
<circle cx="374.4" cy="83.0" r="0.80" fill="#ffffff" fill-opacity="0.79"/>
<circle cx="327.1" cy="303.1" r="0.50" fill="#f0c898" fill-opacity="0.82"/>
<circle cx="379.4" cy="147.6" r="0.45" fill="#b9c6e6" fill-opacity="0.82"/>
<circle cx="367.1" cy="167.1" r="0.80" fill="#b9c6e6" fill-opacity="0.78"/>
<circle cx="297.7" cy="379.7" r="0.70" fill="#f0c898" fill-opacity="0.76"/>
<circle cx="323.2" cy="243.6" r="0.50" fill="#f0c898" fill-opacity="0.78"/>
<circle cx="405.3" cy="104.0" r="0.60" fill="#c8d4f4" fill-opacity="0.91"/>
<circle cx="384.3" cy="116.1" r="0.45" fill="#e8e8e8" fill-opacity="0.97"/>
<circle cx="365.6" cy="94.9" r="0.45" fill="#f0c898" fill-opacity="0.90"/>
<circle cx="351.3" cy="238.6" r="0.55" fill="#ffffff" fill-opacity="0.71"/>
<circle cx="357.2" cy="214.5" r="0.45" fill="#e8e8e8" fill-opacity="0.76"/>
<circle cx="268.4" cy="360.5" r="0.45" fill="#c8d4f4" fill-opacity="1.00"/>
<circle cx="271.6" cy="345.2" r="0.50" fill="#e8e8e8" fill-opacity="0.96"/>
<circle cx="303.4" cy="334.3" r="0.55" fill="#e0b888" fill-opacity="0.72"/>
<circle cx="273.4" cy="354.9" r="0.55" fill="#e0b888" fill-opacity="0.82"/>
<circle cx="320.0" cy="286.0" r="0.50" fill="#e0b888" fill-opacity="0.85"/>
<circle cx="336.5" cy="254.2" r="0.70" fill="#e8e8e8" fill-opacity="0.90"/>
<circle cx="363.4" cy="110.3" r="0.45" fill="#e0b888" fill-opacity="0.84"/>
<circle cx="272.0" cy="363.2" r="0.45" fill="#f0c898" fill-opacity="0.92"/>
<circle cx="383.1" cy="136.7" r="0.80" fill="#ffffff" fill-opacity="0.96"/>
<circle cx="405.7" cy="109.5" r="0.45" fill="#e0b888" fill-opacity="0.87"/>
<circle cx="305.9" cy="317.2" r="0.60" fill="#e8e8e8" fill-opacity="0.98"/>
<circle cx="296.9" cy="319.0" r="0.60" fill="#f0c898" fill-opacity="0.80"/>
<circle cx="394.0" cy="88.0" r="0.80" fill="#ffffff" fill-opacity="0.94"/>
<circle cx="320.7" cy="336.1" r="0.45" fill="#e8e8e8" fill-opacity="0.83"/>
<circle cx="330.8" cy="306.6" r="0.55" fill="#e8e8e8" fill-opacity="0.95"/>
<circle cx="311.9" cy="289.7" r="0.60" fill="#b9c6e6" fill-opacity="0.86"/>
<circle cx="351.4" cy="267.2" r="0.55" fill="#e8e8e8" fill-opacity="0.75"/>
<circle cx="321.6" cy="329.0" r="0.60" fill="#c8d4f4" fill-opacity="0.74"/>
<circle cx="372.3" cy="56.6" r="0.70" fill="#b9c6e6" fill-opacity="0.80"/>
<circle cx="354.7" cy="247.4" r="0.50" fill="#b9c6e6" fill-opacity="0.98"/>
<circle cx="360.9" cy="100.7" r="0.70" fill="#e0b888" fill-opacity="0.74"/>
<circle cx="340.2" cy="38.4" r="0.45" fill="#e8e8e8" fill-opacity="0.90"/>
<circle cx="381.3" cy="58.4" r="0.60" fill="#c8d4f4" fill-opacity="0.76"/>
<circle cx="387.3" cy="42.4" r="0.70" fill="#c8d4f4" fill-opacity="0.85"/>
<circle cx="389.5" cy="90.0" r="0.45" fill="#e8e8e8" fill-opacity="0.92"/>
<circle cx="381.6" cy="94.8" r="0.55" fill="#e0b888" fill-opacity="0.83"/>
<circle cx="351.2" cy="240.7" r="0.45" fill="#b9c6e6" fill-opacity="0.89"/>
<circle cx="285.6" cy="381.5" r="0.60" fill="#f0c898" fill-opacity="0.86"/>
<circle cx="308.0" cy="310.1" r="0.55" fill="#ffffff" fill-opacity="0.88"/>
<circle cx="309.8" cy="358.7" r="0.55" fill="#f0c898" fill-opacity="0.84"/>
<circle cx="357.7" cy="44.3" r="0.55" fill="#f0c898" fill-opacity="0.77"/>
<circle cx="378.8" cy="184.9" r="0.70" fill="#e0b888" fill-opacity="0.92"/>
<circle cx="331.7" cy="287.0" r="0.80" fill="#ffffff" fill-opacity="0.74"/>
<circle cx="296.7" cy="354.5" r="0.55" fill="#e8e8e8" fill-opacity="0.94"/>
<circle cx="331.1" cy="285.0" r="0.50" fill="#b9c6e6" fill-opacity="0.72"/>
<circle cx="340.5" cy="293.9" r="0.45" fill="#b9c6e6" fill-opacity="0.90"/>
<circle cx="368.9" cy="160.8" r="0.45" fill="#e8e8e8" fill-opacity="0.72"/>
<circle cx="326.3" cy="241.8" r="0.60" fill="#b9c6e6" fill-opacity="0.90"/>
<circle cx="345.5" cy="260.2" r="0.50" fill="#e0b888" fill-opacity="0.88"/>
<circle cx="339.1" cy="268.2" r="0.50" fill="#ffffff" fill-opacity="0.71"/>
<circle cx="370.9" cy="62.1" r="0.55" fill="#b9c6e6" fill-opacity="0.77"/>
<circle cx="298.7" cy="347.9" r="0.80" fill="#e0b888" fill-opacity="0.81"/>
<circle cx="308.0" cy="355.4" r="0.55" fill="#b9c6e6" fill-opacity="0.93"/>
<circle cx="391.9" cy="133.5" r="0.80" fill="#e8e8e8" fill-opacity="0.89"/>
<circle cx="382.1" cy="101.4" r="0.70" fill="#b9c6e6" fill-opacity="0.88"/>
<circle cx="404.4" cy="98.4" r="0.55" fill="#b9c6e6" fill-opacity="0.80"/>
<circle cx="293.4" cy="358.9" r="0.45" fill="#e0b888" fill-opacity="0.95"/>
<circle cx="261.1" cy="366.3" r="0.55" fill="#f0c898" fill-opacity="0.75"/>
<circle cx="389.9" cy="112.4" r="0.50" fill="#e8e8e8" fill-opacity="0.71"/>
<circle cx="393.9" cy="113.4" r="0.70" fill="#e0b888" fill-opacity="0.95"/>
<circle cx="380.8" cy="96.3" r="0.80" fill="#e8e8e8" fill-opacity="0.83"/>
<circle cx="291.4" cy="387.2" r="0.45" fill="#e0b888" fill-opacity="0.72"/>
<circle cx="358.7" cy="30.7" r="0.60" fill="#b9c6e6" fill-opacity="0.98"/>
<circle cx="379.1" cy="119.0" r="0.45" fill="#b9c6e6" fill-opacity="0.98"/>
<circle cx="313.5" cy="351.7" r="0.80" fill="#e0b888" fill-opacity="0.76"/>
<circle cx="368.8" cy="78.1" r="0.80" fill="#f0c898" fill-opacity="0.84"/>
<circle cx="257.6" cy="361.3" r="0.80" fill="#e8e8e8" fill-opacity="0.83"/>
<circle cx="403.6" cy="49.1" r="0.70" fill="#ffffff" fill-opacity="0.73"/>
<circle cx="370.7" cy="152.2" r="0.45" fill="#b9c6e6" fill-opacity="0.74"/>
<circle cx="296.5" cy="362.6" r="0.50" fill="#f0c898" fill-opacity="0.76"/>
<circle cx="291.6" cy="367.5" r="0.55" fill="#e8e8e8" fill-opacity="0.99"/>
<circle cx="328.7" cy="278.5" r="0.60" fill="#c8d4f4" fill-opacity="0.95"/>
<circle cx="324.1" cy="247.0" r="0.50" fill="#e8e8e8" fill-opacity="0.89"/>
<circle cx="319.1" cy="247.3" r="0.55" fill="#c8d4f4" fill-opacity="0.94"/>
<circle cx="343.8" cy="269.6" r="0.70" fill="#ffffff" fill-opacity="0.71"/>
<circle cx="376.7" cy="151.2" r="0.55" fill="#e8e8e8" fill-opacity="0.89"/>
<circle cx="338.9" cy="36.2" r="0.55" fill="#f0c898" fill-opacity="0.85"/>
<circle cx="330.2" cy="250.3" r="0.60" fill="#e0b888" fill-opacity="0.98"/>
<circle cx="304.7" cy="326.9" r="0.55" fill="#c8d4f4" fill-opacity="0.80"/>
<circle cx="324.2" cy="302.2" r="0.45" fill="#c8d4f4" fill-opacity="0.91"/>
<circle cx="330.7" cy="279.1" r="0.55" fill="#f0c898" fill-opacity="0.87"/>
<circle cx="330.1" cy="230.9" r="0.70" fill="#e8e8e8" fill-opacity="0.82"/>
<circle cx="386.4" cy="138.0" r="0.80" fill="#b9c6e6" fill-opacity="0.98"/>
<circle cx="379.2" cy="148.1" r="0.80" fill="#ffffff" fill-opacity="0.91"/>
<circle cx="338.6" cy="229.5" r="0.45" fill="#c8d4f4" fill-opacity="0.84"/>
<circle cx="344.2" cy="35.0" r="0.60" fill="#ffffff" fill-opacity="0.97"/>
<circle cx="349.1" cy="222.1" r="0.70" fill="#c8d4f4" fill-opacity="0.85"/>
<circle cx="368.1" cy="88.0" r="0.60" fill="#b9c6e6" fill-opacity="0.96"/>
<circle cx="350.8" cy="66.9" r="0.60" fill="#c8d4f4" fill-opacity="1.00"/>
<circle cx="332.4" cy="277.6" r="0.45" fill="#b9c6e6" fill-opacity="0.87"/>
<circle cx="384.8" cy="178.2" r="0.60" fill="#b9c6e6" fill-opacity="0.91"/>
<circle cx="368.6" cy="100.0" r="0.55" fill="#b9c6e6" fill-opacity="0.80"/>
<circle cx="297.7" cy="317.1" r="0.70" fill="#b9c6e6" fill-opacity="0.96"/>
<circle cx="278.2" cy="351.3" r="0.70" fill="#e0b888" fill-opacity="0.85"/>
<circle cx="317.9" cy="285.9" r="0.70" fill="#ffffff" fill-opacity="0.93"/>
<circle cx="362.4" cy="101.4" r="0.80" fill="#e8e8e8" fill-opacity="0.95"/>
<circle cx="363.6" cy="109.4" r="0.70" fill="#b9c6e6" fill-opacity="0.82"/>
<circle cx="378.1" cy="73.5" r="0.45" fill="#e8e8e8" fill-opacity="0.85"/>
<circle cx="364.0" cy="165.4" r="0.45" fill="#e0b888" fill-opacity="0.70"/>
<circle cx="263.6" cy="354.6" r="0.80" fill="#e0b888" fill-opacity="0.73"/>
<circle cx="356.9" cy="54.7" r="0.55" fill="#e8e8e8" fill-opacity="0.98"/>
<circle cx="289.9" cy="383.3" r="0.55" fill="#e0b888" fill-opacity="0.82"/>
<circle cx="316.8" cy="320.9" r="0.45" fill="#e8e8e8" fill-opacity="0.74"/>
<circle cx="332.1" cy="241.3" r="0.45" fill="#e0b888" fill-opacity="0.79"/>
<circle cx="307.8" cy="346.9" r="0.60" fill="#f0c898" fill-opacity="0.93"/>
<circle cx="308.8" cy="356.4" r="0.60" fill="#c8d4f4" fill-opacity="0.78"/>
<circle cx="322.6" cy="251.5" r="0.45" fill="#c8d4f4" fill-opacity="0.88"/>
<circle cx="360.6" cy="60.1" r="0.45" fill="#b9c6e6" fill-opacity="1.00"/>
<circle cx="309.5" cy="302.4" r="0.55" fill="#ffffff" fill-opacity="0.95"/>
<circle cx="390.5" cy="69.6" r="0.45" fill="#c8d4f4" fill-opacity="0.72"/>
<circle cx="356.1" cy="68.8" r="0.50" fill="#e0b888" fill-opacity="0.74"/>
<circle cx="342.5" cy="251.2" r="0.45" fill="#e8e8e8" fill-opacity="0.88"/>
<circle cx="368.3" cy="34.0" r="0.80" fill="#c8d4f4" fill-opacity="0.80"/>
<circle cx="351.0" cy="63.2" r="0.50" fill="#f0c898" fill-opacity="0.78"/>
<circle cx="395.2" cy="89.2" r="0.70" fill="#e0b888" fill-opacity="0.97"/>
<circle cx="364.3" cy="204.2" r="0.80" fill="#e8e8e8" fill-opacity="0.86"/>
<circle cx="323.4" cy="288.9" r="0.60" fill="#e8e8e8" fill-opacity="0.82"/>
<circle cx="338.7" cy="33.1" r="0.55" fill="#b9c6e6" fill-opacity="0.71"/>
<circle cx="376.5" cy="83.7" r="0.50" fill="#c8d4f4" fill-opacity="0.83"/>
<circle cx="357.9" cy="100.2" r="0.45" fill="#c8d4f4" fill-opacity="0.79"/>
<circle cx="307.0" cy="349.2" r="0.80" fill="#e0b888" fill-opacity="0.87"/>
<circle cx="312.4" cy="301.1" r="0.50" fill="#c8d4f4" fill-opacity="0.84"/>
<circle cx="285.0" cy="361.7" r="0.80" fill="#ffffff" fill-opacity="0.99"/>
<circle cx="324.3" cy="286.6" r="0.70" fill="#c8d4f4" fill-opacity="0.76"/>
<circle cx="414.5" cy="56.0" r="0.45" fill="#e0b888" fill-opacity="0.85"/>
<circle cx="335.6" cy="300.0" r="0.55" fill="#b9c6e6" fill-opacity="0.98"/>
<circle cx="369.1" cy="36.7" r="0.45" fill="#e0b888" fill-opacity="0.86"/>
<circle cx="277.9" cy="334.7" r="0.50" fill="#e0b888" fill-opacity="0.99"/>
<circle cx="351.5" cy="231.3" r="0.50" fill="#c8d4f4" fill-opacity="0.85"/>
<circle cx="294.1" cy="336.8" r="0.70" fill="#e8e8e8" fill-opacity="0.71"/>
<circle cx="390.0" cy="66.3" r="0.80" fill="#b9c6e6" fill-opacity="0.98"/>
<circle cx="374.3" cy="57.8" r="0.70" fill="#b9c6e6" fill-opacity="0.79"/>
<circle cx="330.6" cy="272.9" r="0.50" fill="#b9c6e6" fill-opacity="0.95"/>
<circle cx="269.7" cy="379.0" r="0.45" fill="#e8e8e8" fill-opacity="0.76"/>
<circle cx="322.2" cy="260.0" r="0.50" fill="#e0b888" fill-opacity="0.98"/>
<circle cx="308.2" cy="308.1" r="0.70" fill="#f0c898" fill-opacity="0.89"/>
<circle cx="306.5" cy="360.3" r="0.55" fill="#f0c898" fill-opacity="0.75"/>
<circle cx="330.4" cy="272.2" r="0.70" fill="#c8d4f4" fill-opacity="0.90"/>
<circle cx="362.9" cy="168.8" r="0.70" fill="#c8d4f4" fill-opacity="0.79"/>
<circle cx="319.2" cy="338.7" r="0.50" fill="#f0c898" fill-opacity="1.00"/>
<circle cx="355.6" cy="208.0" r="0.50" fill="#e0b888" fill-opacity="0.88"/>
<circle cx="282.0" cy="383.9" r="0.60" fill="#e0b888" fill-opacity="0.90"/>
<circle cx="267.2" cy="359.3" r="0.50" fill="#ffffff" fill-opacity="0.72"/>
<circle cx="394.8" cy="67.3" r="0.50" fill="#e0b888" fill-opacity="0.93"/>
<circle cx="301.6" cy="365.9" r="0.80" fill="#f0c898" fill-opacity="0.85"/>
<circle cx="349.8" cy="246.8" r="0.50" fill="#f0c898" fill-opacity="0.87"/>
<circle cx="232.0" cy="314.0" r="0.55" fill="#c81030"/>
<circle cx="419.8" cy="247.6" r="0.55" fill="#c81030"/>
<circle cx="246.5" cy="173.9" r="0.55" fill="#c81030"/>
<circle cx="251.2" cy="360.8" r="0.55" fill="#c81030"/>
<circle cx="238.2" cy="293.7" r="0.55" fill="#c81030"/>
<circle cx="467.5" cy="245.0" r="0.55" fill="#c81030"/>
<circle cx="470.8" cy="261.3" r="0.55" fill="#c81030"/>
<circle cx="414.2" cy="227.5" r="0.55" fill="#c81030"/>
<circle cx="329.3" cy="324.3" r="0.55" fill="#c81030"/>
<circle cx="199.2" cy="349.7" r="0.55" fill="#c81030"/>
<circle cx="186.4" cy="155.2" r="0.55" fill="#c81030"/>
<circle cx="275.2" cy="298.5" r="0.55" fill="#c81030"/>
<circle cx="253.7" cy="114.0" r="0.55" fill="#c81030"/>
<circle cx="326.7" cy="96.1" r="0.55" fill="#c81030"/>
<circle cx="348.7" cy="290.4" r="0.55" fill="#c81030"/>
<circle cx="429.8" cy="320.2" r="0.55" fill="#c81030"/>
<circle cx="357.5" cy="54.0" r="0.55" fill="#c81030"/>
<circle cx="352.6" cy="230.0" r="0.55" fill="#c81030"/>
<circle cx="143.3" cy="170.9" r="0.55" fill="#c81030"/>
<circle cx="222.8" cy="216.6" r="0.55" fill="#c81030"/>
<circle cx="142.5" cy="199.0" r="0.55" fill="#c81030"/>
<circle cx="396.2" cy="136.2" r="0.55" fill="#c81030"/>
<circle cx="338.8" cy="45.5" r="0.55" fill="#c81030"/>
<circle cx="279.8" cy="332.1" r="0.55" fill="#c81030"/>
<circle cx="437.7" cy="238.9" r="0.55" fill="#c81030"/>
<circle cx="237.4" cy="172.6" r="0.55" fill="#c81030"/>
<circle cx="405.1" cy="115.5" r="0.55" fill="#c81030"/>
<circle cx="219.2" cy="235.8" r="0.55" fill="#c81030"/>
<circle cx="170.3" cy="155.2" r="0.55" fill="#c81030"/>
<circle cx="158.3" cy="249.9" r="0.55" fill="#c81030"/>
<circle cx="203.5" cy="266.9" r="0.55" fill="#c81030"/>
<circle cx="255.0" cy="143.6" r="0.55" fill="#c81030"/>
<circle cx="280.8" cy="219.8" r="0.55" fill="#c81030"/>
<circle cx="288.8" cy="390.7" r="0.55" fill="#c81030"/>
<circle cx="263.1" cy="105.3" r="0.55" fill="#c81030"/>
<circle cx="202.7" cy="148.9" r="0.55" fill="#c81030"/>
<circle cx="413.6" cy="359.9" r="0.55" fill="#c81030"/>
<circle cx="365.1" cy="112.0" r="0.55" fill="#c81030"/>
<circle cx="345.4" cy="315.6" r="0.55" fill="#c81030"/>
<circle cx="478.0" cy="202.6" r="0.55" fill="#c81030"/>
<circle cx="337.8" cy="204.8" r="0.55" fill="#c81030"/>
<circle cx="397.3" cy="333.5" r="0.55" fill="#c81030"/>
<circle cx="316.6" cy="26.7" r="0.55" fill="#c81030"/>
<circle cx="466.0" cy="101.2" r="0.55" fill="#c81030"/>
<circle cx="451.8" cy="174.0" r="0.55" fill="#c81030"/>
<circle cx="406.9" cy="79.7" r="0.55" fill="#c81030"/>
<circle cx="457.8" cy="220.9" r="0.55" fill="#c81030"/>
<circle cx="289.3" cy="221.5" r="0.55" fill="#c81030"/>
<circle cx="187.7" cy="337.1" r="0.55" fill="#c81030"/>
<circle cx="266.8" cy="378.6" r="0.55" fill="#c81030"/>
<circle cx="424.4" cy="149.3" r="0.55" fill="#c81030"/>
<circle cx="414.0" cy="178.6" r="0.55" fill="#c81030"/>
<circle cx="259.6" cy="38.3" r="0.55" fill="#c81030"/>
<circle cx="212.2" cy="243.5" r="0.55" fill="#c81030"/>
<circle cx="380.8" cy="58.6" r="0.55" fill="#c81030"/>
<circle cx="186.2" cy="207.2" r="0.55" fill="#c81030"/>
<circle cx="181.2" cy="206.2" r="0.55" fill="#c81030"/>
<circle cx="172.7" cy="205.8" r="0.55" fill="#c81030"/>
<circle cx="170.2" cy="203.1" r="0.55" fill="#c81030"/>
<circle cx="169.6" cy="199.9" r="0.55" fill="#c81030"/>
<circle cx="183.1" cy="202.5" r="0.55" fill="#c81030"/>
<circle cx="183.2" cy="197.3" r="0.55" fill="#c81030"/>
<circle cx="182.2" cy="200.0" r="0.55" fill="#c81030"/>
<circle cx="180.8" cy="200.9" r="0.55" fill="#c81030"/>
<circle cx="175.7" cy="198.3" r="0.55" fill="#c81030"/>
<circle cx="185.1" cy="204.3" r="0.55" fill="#c81030"/>
<circle cx="168.3" cy="198.8" r="0.55" fill="#c81030"/>
<circle cx="171.7" cy="200.3" r="0.55" fill="#c81030"/>
<circle cx="187.4" cy="206.7" r="0.55" fill="#c81030"/>
<circle cx="156.2" cy="129.8" r="1.80" fill="#ffdcae"/>
<circle cx="177.1" cy="105.4" r="1.00" fill="#ffe2bc"/>
<circle cx="237.5" cy="130.7" r="1.10" fill="#c9d6ff"/>
<circle cx="250.0" cy="137.0" r="1.00" fill="#dfe6ff"/>
<circle cx="254.3" cy="145.1" r="1.10" fill="#dfe6ff"/>
<circle cx="260.2" cy="154.2" r="0.80" fill="#fff"/>
<circle cx="256.9" cy="163.1" r="0.90" fill="#fff"/>
<circle cx="269.4" cy="170.5" r="0.90" fill="#e8eeff"/>
<circle cx="276.1" cy="164.3" r="1.10" fill="#ffd9a0"/>
<circle cx="291.1" cy="52.1" r="1.00" fill="#ffcf90"/>
<circle cx="281.9" cy="58.8" r="0.80" fill="#ffe0b0"/>
<circle cx="295.3" cy="66.3" r="0.80" fill="#ffe0b0"/>
<circle cx="321.9" cy="88.7" r="0.90" fill="#ffe0b0"/>
<circle cx="312.7" cy="98.1" r="0.80" fill="#dfe6ff"/>
<circle cx="320.4" cy="135.9" r="1.10" fill="#fff"/>
<circle cx="290.9" cy="122.2" r="0.90" fill="#ffcf90"/>
<circle cx="300.5" cy="120.5" r="0.70" fill="#fff"/>
<circle cx="354.9" cy="90.0" r="0.90" fill="#fff"/>
<circle cx="344.4" cy="105.1" r="0.80" fill="#dfe6ff"/>
<circle cx="371.9" cy="44.4" r="1.30" fill="#e8eeff"/>
<circle cx="348.5" cy="205.8" r="1.80" fill="#fff0d0"/>
<circle cx="336.5" cy="210.2" r="1.00" fill="#cfe0ff"/>
<circle cx="339.0" cy="222.8" r="0.90" fill="#dfe6ff"/>
<circle cx="354.2" cy="212.0" r="0.80" fill="#fff"/>
<circle cx="302.6" cy="238.8" r="1.40" fill="#ffd9a0"/>
<circle cx="298.0" cy="231.5" r="1.00" fill="#e8eeff"/>
<circle cx="195.5" cy="215.9" r="1.10" fill="#cfdcff"/>
<circle cx="239.0" cy="233.1" r="1.10" fill="#ffc880"/>
<circle cx="236.4" cy="249.3" r="1.30" fill="#cfdcff"/>
<circle cx="301.3" cy="279.0" r="1.70" fill="#ffffff"/>
<circle cx="327.4" cy="323.7" r="2.70" fill="#eef1ff"/>
<circle cx="373.4" cy="301.2" r="1.70" fill="#e6ecff"/>
<circle cx="348.7" cy="273.4" r="1.60" fill="#ffb870"/>
<circle cx="362.6" cy="273.4" r="1.10" fill="#cfdcff"/>
<circle cx="356.0" cy="284.5" r="0.80" fill="#dfe6ff"/>
<circle cx="358.4" cy="283.8" r="0.80" fill="#dfe6ff"/>
<circle cx="360.9" cy="283.2" r="0.80" fill="#dfe6ff"/>
<circle cx="357.5" cy="291.5" r="0.90" fill="#dfe6ff"/>
<circle cx="379.6" cy="249.4" r="1.50" fill="#ffb870"/>
<circle cx="386.8" cy="248.4" r="0.90" fill="#fff"/>
<circle cx="416.0" cy="248.4" r="0.90" fill="#dfe6ff"/>
<circle cx="401.8" cy="263.1" r="0.80" fill="#dfe6ff"/>
<circle cx="393.2" cy="227.1" r="1.20" fill="#d8c8ff"/>
<circle cx="424.1" cy="161.4" r="1.10" fill="#ffc880"/>
<circle cx="400.7" cy="173.8" r="1.00" fill="#ffc880"/>
<circle cx="450.5" cy="137.0" r="1.00" fill="#cfdcff"/>
<circle cx="440.8" cy="152.1" r="0.90" fill="#ffd9a0"/>
<circle cx="431.1" cy="200.0" r="0.90" fill="#ffd9a0"/>
<circle cx="319.3" cy="353.1" r="1.20" fill="#dfe6ff"/>
<circle cx="322.5" cy="340.0" r="0.90" fill="#fff"/>
<circle cx="341.9" cy="355.1" r="0.80" fill="#cfdcff"/>
<circle cx="339.4" cy="325.9" r="0.80" fill="#cfdcff"/>
<circle cx="372.0" cy="130.5" r="0.90" fill="#fff"/>
<circle cx="380.5" cy="128.0" r="0.90" fill="#fff"/>
<circle cx="385.0" cy="137.5" r="1.00" fill="#ffd9a0"/>
<circle cx="366.0" cy="125.0" r="0.80" fill="#fff"/>
<circle cx="392.0" cy="133.0" r="0.80" fill="#dfe6ff"/>
<circle cx="372.0" cy="168.0" r="1.00" fill="#fff0d0"/>
<circle cx="384.5" cy="196.0" r="0.90" fill="#cfdcff"/>
<circle cx="218.9" cy="156.8" r="0.90" fill="#cfdcff"/>
<circle cx="366.5" cy="323.7" r="0.80" fill="#fff"/>
<circle cx="369.5" cy="330.4" r="0.80" fill="#ffd9a0"/>
<circle cx="422.8" cy="72.5" r="0.80" fill="#ffc880"/>
<circle cx="303.0" cy="368.0" r="0.90" fill="#cfdcff"/>
<circle cx="283.0" cy="388.0" r="0.90" fill="#cfdcff"/>
<g fill="none" stroke="#e01828" stroke-width="0.7">
<ellipse cx="367.8" cy="85.4" rx="3.2" ry="2.0" transform="rotate(-35 367.8 85.4)"/>
<ellipse cx="416.9" cy="145.9" rx="4.0" ry="1.5" transform="rotate(0 416.9 145.9)"/>
<ellipse cx="428.3" cy="177.1" rx="1.5" ry="1.0" transform="rotate(10 428.3 177.1)"/>
<ellipse cx="278.6" cy="249.6" rx="1.5" ry="1.5" transform="rotate(0 278.6 249.6)"/>
<ellipse cx="376.5" cy="210.7" rx="1.2" ry="2.6" transform="rotate(25 376.5 210.7)"/>
</g>
<polygon points="376.1,44.2 377.8,42.7 379.2,44 380.5,46 383.3,44.4 384,46.8 382.8,49.9 380.5,51.1 378.3,51.4 376.6,49.9 376.1,47.2" fill="none" stroke="#e01828" stroke-width="0.75"/>
<path d="M363.5 159 l2 3 l2.2 -0.6 l-1.2 -2.4 z M371.2 160.5 l2.4 0.4 l0.6 2.6 l-2.6 -0.4 z M361.5 162.8 l2.6 0.6 l-0.8 2 l-2.4 -0.8 z" fill="#e01828"/>
<circle cx="341.3" cy="246.1" r="2.9" fill="#f2ea00"/>
<circle cx="326.0" cy="245.0" r="0.8" fill="#e6e000"/>
<circle cx="404.9" cy="232.7" r="0.8" fill="#e6e000"/>
<circle cx="436.9" cy="223.5" r="0.8" fill="#e6e000"/>
<circle cx="385.0" cy="239.3" r="0.8" fill="#e6e000"/>
</g>
<g font-family="Liberation Sans, sans-serif" font-size="5" text-anchor="middle">
<text x="200.9" y="101.5" fill="#b4b46e">Boo</text>
<text x="301.8" y="84.4" fill="#b4b46e">Dra</text>
<text x="280.0" y="116.1" fill="#b4b46e">UMi</text>
<text x="350.6" y="115.3" fill="#b4b46e">Cep</text>
<text x="387.7" y="120.3" fill="#b4b46e">Cas</text>
<text x="416.6" y="129.8" fill="#b4b46e">And</text>
<text x="359.4" y="55.1" fill="#b4b46e">Cyg</text>
<text x="403.2" y="98.2" fill="#b4b46e">Lac</text>
<text x="229.3" y="157.7" fill="#b4b46e">CVn</text>
<text x="189.2" y="175.3" fill="#b4b46e">Com</text>
<text x="258.5" y="182.8" fill="#b4b46e">UMa</text>
<text x="330.4" y="166.9" fill="#b4b46e">Cam</text>
<text x="301.5" y="205.8" fill="#b4b46e">Lyn</text>
<text x="363.0" y="201.8" fill="#b4b46e">Per</text>
<text x="348.0" y="222.8" fill="#b4b46e">Aur</text>
<text x="419.1" y="179.9" fill="#b4b46e">Tri</text>
<text x="464.2" y="193.3" fill="#b4b46e">Psc</text>
<text x="418.3" y="217.2" fill="#b4b46e">Ari</text>
<text x="406.6" y="241.6" fill="#b4b46e">Tau</text>
<text x="483.4" y="250.6" fill="#b4b46e">Cet</text>
<text x="353.5" y="263.4" fill="#b4b46e">Ori</text>
<text x="312.5" y="249.3" fill="#b4b46e">Gem</text>
<text x="284.0" y="238.8" fill="#b4b46e">Cnc</text>
<text x="245.3" y="215.5" fill="#b4b46e">LMi</text>
<text x="227.3" y="239.9" fill="#b4b46e">Leo</text>
<text x="309.0" y="281.0" fill="#b4b46e">CMi</text>
<text x="300.5" y="302.3" fill="#b4b46e">Mon</text>
<text x="209.4" y="284.9" fill="#b4b46e">Sex</text>
<text x="158.4" y="287.2" fill="#b4b46e">Crt</text>
<text x="216.8" y="327.2" fill="#b4b46e">Hya</text>
<text x="258.6" y="338.6" fill="#b4b46e">Pyx</text>
<text x="335.5" y="346.9" fill="#b4b46e">CMa</text>
<text x="356.1" y="342.7" fill="#b4b46e">Lep</text>
<text x="365.5" y="381.3" fill="#b4b46e">Col</text>
<text x="438.0" y="311.8" fill="#b4b46e">Eri</text>
<text x="436.6" y="228.2" fill="#e8640c" stroke="#e8640c" stroke-width="0.18">Mars</text>
<text x="404.4" y="236.9" fill="#e8640c" stroke="#e8640c" stroke-width="0.18">Uranus</text>
<text x="383.4" y="243.5" fill="#e8640c" stroke="#e8640c" stroke-width="0.18">Jupiter</text>
<text x="478.4" y="240.6" fill="#e8640c" stroke="#e8640c" stroke-width="0.18">Eris</text>
<text x="325.5" y="250.1" fill="#e8640c" stroke="#e8640c" stroke-width="0.18">Mercury</text>
<g text-anchor="end">
<text x="153.8" y="128.6" fill="#e4e4b8">Arcturus</text>
<text x="370.0" y="43.6" fill="#e4e4b8">Deneb</text>
<text x="347.0" y="205.2" fill="#e4e4b8">Capella</text>
<text x="377.6" y="248.2" fill="#e4e4b8">Aldebaran</text>
<text x="346.8" y="272.8" fill="#e4e4b8">Betelgeuse</text>
<text x="301.4" y="237.8" fill="#e4e4b8">Pollux</text>
<text x="234.6" y="248.6" fill="#e4e4b8">Regulus</text>
<text x="299.2" y="278.0" fill="#e4e4b8">Procyon</text>
<text x="324.6" y="323.0" fill="#e4e4b8">Sirius</text>
<text x="318.0" y="351.2" fill="#e4e4b8">Adhara</text>
<text x="371.5" y="300.2" fill="#e4e4b8">Rigel</text>
</g>
<text x="341.3" y="253.3" fill="#e8e000">Sun</text>
</g>
<circle cx="319.3" cy="210.8" r="186.0" fill="none" stroke="#b42a38" stroke-width="0.8"/>
<g font-family="Liberation Sans, sans-serif" font-size="6" text-anchor="middle" fill="#e0283a">
<text x="319.8" y="27.0">N</text>
<text x="319.8" y="399.0">S</text>
<text x="133.3" y="213.0">E</text>
<text x="505.3" y="213.0">W</text>
</g>
</svg>

<!-- left controls -->
<div class="btn red" style="left:15px;top:18.3px;width:61px;height:15.1px"></div>
<div class="abs" style="left:20px;top:21.9px;font-size:6.5px;line-height:8px;color:#fff;white-space:nowrap;-webkit-text-stroke:0.22px #fff">Select database</div>
<svg class="abs" style="left:67.6px;top:24.8px" width="4" height="3" viewBox="0 0 4 3"><path d="M0.3 0.4 H3.5 L1.9 2.2 Z" fill="#fff"/></svg>
<div class="abs" style="left:84px;top:15px;width:72px;height:21.5px;background:#343a40;border-radius:2px"></div>
<div class="abs" style="left:88px;top:18.5px;font-size:4.6px;color:#8d949b">Select target</div>
<svg class="abs" style="left:144.5px;top:24.5px" width="6" height="4" viewBox="0 0 6 4"><path d="M0.8 0.8 L3 3 L5.2 0.8" stroke="#e8e8e8" stroke-width="0.9" fill="none"/></svg>

<div class="btn out" style="left:9.1px;top:38.3px;width:73px;height:16px">GOTO</div>
<div class="btn red" style="left:84px;top:39px;width:72.5px;height:14.8px">STOP</div>
<div class="btn out" style="left:9.1px;top:60.3px;width:73px;height:15.5px">SYNC</div>
<div class="btn" style="left:83.2px;top:60.5px;width:73.5px;height:15.2px">SUGG. TARGETS</div>
<div class="btn" style="left:9.1px;top:77.5px;width:73.6px;height:15.4px">TRACK</div>
<div class="btn" style="left:9.1px;top:94.7px;width:73.6px;height:15.4px">PARK</div>

<div class="chk on" style="top:172px"></div><div class="lbl" style="top:171.8px">AltAz Grid</div>
<div class="chk off" style="top:188.8px"></div><div class="lbl" style="top:188.6px">EQ grid</div>
<div class="chk on" style="top:205.6px"></div><div class="lbl" style="top:205.4px">Constellation</div>
<div class="chk on" style="top:222.4px"></div><div class="lbl" style="top:222.2px">Names</div>
<div class="chk on" style="top:239.2px"></div><div class="lbl" style="top:239px">Planets</div>
<div class="chk on" style="top:256px"></div><div class="lbl" style="top:255.8px">Milky Way</div>
<svg class="abs" style="left:0;top:0;pointer-events:none" width="30" height="413" viewBox="0 0 30 413"><g fill="none" stroke="#1f2a33" stroke-width="1.1">
<path d="M11 175.6 l1.6 1.7 l2.9 -3.3"/><path d="M11 209.200 l1.6 1.7 l2.9 -3.3"/><path d="M11 226 l1.6 1.7 l2.9 -3.3"/><path d="M11 242.8 l1.6 1.7 l2.9 -3.3"/><path d="M11 259.6 l1.6 1.7 l2.9 -3.3"/></g></svg>

<div class="cap" style="left:42px;top:348px;width:80px">Mount control</div>
<div class="btn" style="left:62px;top:358px;width:42px;height:16.2px;font-size:6.2px">N</div>
<div class="btn" style="left:9.2px;top:375.7px;width:46.3px;height:16.3px;font-size:6.2px">W</div>
<div class="abs" style="left:56.5px;top:377px;width:52px;height:14.2px;background:#fff;border-radius:2px"></div>
<div class="abs" style="left:72px;top:380.4px;width:20px;text-align:center;font-size:6.6px;color:#666">10</div>
<svg class="abs" style="left:97.5px;top:382.3px" width="6" height="4" viewBox="0 0 6 4"><path d="M0.8 0.8 L3 3 L5.2 0.8" stroke="#333" stroke-width="0.9" fill="none"/></svg>
<div class="btn" style="left:110.7px;top:375.7px;width:46px;height:16.3px;font-size:6.2px">E</div>
<div class="btn" style="left:62px;top:393.6px;width:42px;height:16.4px;font-size:6.2px">S</div>

<!-- time controls -->
<div class="abs" style="left:271.2px;top:14.6px;width:70px;height:15.6px;background:rgba(140,140,140,0.86);border:1px solid #c8343f;border-radius:2.5px"></div>
<div class="abs" style="left:288.3px;top:15.5px;width:0.8px;height:14px;background:#6e6e6e"></div>
<div class="abs" style="left:304.7px;top:15.5px;width:0.8px;height:14px;background:#6e6e6e"></div>
<div class="abs" style="left:324.2px;top:15.5px;width:0.8px;height:14px;background:#6e6e6e"></div>
<div class="abs" style="left:272px;top:19.2px;width:16px;text-align:center;font-size:5.8px;font-weight:bold;color:#222">0</div>
<div class="abs" style="left:305px;top:19.2px;width:19px;text-align:center;font-size:5.8px;font-weight:bold;color:#a2a2a2">NOW</div>
<svg class="abs" style="left:292.5px;top:19.5px" width="8" height="6" viewBox="0 0 8 6"><path d="M3.8 0.6 V5.4 L0.6 3 Z M7.4 0.6 V5.4 L4.2 3 Z" fill="#1c1c1c"/></svg>
<svg class="abs" style="left:329px;top:19.5px" width="8" height="6" viewBox="0 0 8 6"><path d="M0.6 0.6 V5.4 L3.8 3 Z M4.2 0.6 V5.4 L7.4 3 Z" fill="#1c1c1c"/></svg>

<!-- telescope position -->
<div class="abs" style="left:476px;top:14px;width:152.5px;height:38px;background:#919191;border:1px solid #c8343f;border-radius:2.5px"></div>
<div class="abs" style="left:481.5px;top:25.2px;font-size:6px;font-weight:bold;color:#2a2a2a;line-height:8.2px">Telescope<br>position:</div>
<div class="abs" style="left:537.8px;top:16px;width:80px;text-align:center;font-size:5px;color:#333;line-height:8.1px;white-space:nowrap"><b>RA:</b> 18°27'21.4"<br><b>DEC:</b> +42°39'02.5"</div>
<div class="abs" style="left:537.8px;top:35.5px;width:80px;text-align:center;font-size:5px;color:#333;line-height:7.5px;white-space:nowrap"><b>AZ:</b> 006°06'46.9"<br><b>ALT:</b> 00°43'09.3"</div>

<!-- bottom zoom buttons -->
<div class="btn" style="left:246.8px;top:394.3px;width:46.4px;height:15.4px"><svg width="7" height="7" viewBox="0 0 7 7"><circle cx="2.8" cy="2.8" r="1.9" fill="none" stroke="#1c1c1c" stroke-width="1.1"/><path d="M4.3 4.3 L6.3 6.3" stroke="#1c1c1c" stroke-width="1.3"/></svg></div>
<div class="btn" style="left:303px;top:394.3px;width:45.6px;height:15.4px"><svg width="7" height="7" viewBox="0 0 7 7"><path d="M1.2 1.2 L5.8 5.8 M5.8 1.2 L1.2 5.8" stroke="#1c1c1c" stroke-width="1.3"/><path d="M0.2 0.2 H3 L0.2 3 Z M6.8 0.2 V3 L4 0.2 Z M0.2 6.8 V4 L3 6.8 Z M6.8 6.8 H4 L6.8 4 Z" fill="#1c1c1c"/></svg></div>
<div class="btn" style="left:359px;top:394.3px;width:46.4px;height:15.4px"><svg width="7" height="7" viewBox="0 0 7 7"><circle cx="2.8" cy="2.8" r="1.9" fill="none" stroke="#1c1c1c" stroke-width="1.1"/><path d="M4.3 4.3 L6.3 6.3" stroke="#1c1c1c" stroke-width="1.3"/></svg></div>

<!-- rotator -->
<div class="cap" style="left:554px;top:303.4px;width:80px">Rotator control</div>
<div class="abs" style="left:564px;top:312.3px;width:64.8px;height:15px;background:#fff;border-radius:2px"></div>
<div class="abs" style="left:568.6px;top:315.8px;font-size:6.7px;color:#666">-69.7</div>
<div class="abs" style="left:564px;top:333px;width:24px;height:1px;background:#f0483e"></div>
<div class="abs" style="left:588px;top:333px;width:40.8px;height:1px;background:#96323a"></div>
<div class="abs" style="left:584px;top:329.6px;width:7.8px;height:7.8px;border-radius:50%;background:#f4473c"></div>
<div class="btn" style="left:564.6px;top:343px;width:64.6px;height:15.6px;font-size:6px">GO</div>
<div class="btn" style="left:564.6px;top:360.2px;width:64.6px;height:15.4px;font-size:6px">STOP</div>
<div class="btn red" style="left:564.6px;top:377.2px;width:64.6px;height:15.6px;color:#1d1d1d;font-size:6px">INACTIVE</div>
<div class="btn" style="left:564.6px;top:394.7px;width:64.6px;height:15.4px;font-size:6px">DISABLE</div>
<div class="cap" style="left:482px;top:381.4px;width:80px">Field de-rotation</div>
<div class="abs" style="left:490.3px;top:394.2px;width:64.4px;height:14.8px;background:#e9ecef;border-radius:2px"></div>
<div class="abs" style="left:490.3px;top:397.6px;width:64.4px;text-align:center;font-size:6.7px;color:#9a9a9a">0"/sec</div>

<!-- side panel -->
<div class="sbtn" style="top:15.6px;background:#198754">CONNECTED</div>
<div class="btn" style="left:647.3px;top:68px;width:45.2px;height:12.7px;background:transparent;border-color:#b87322;color:#f18b1c;font-size:4.8px">OTA 1</div>
<div class="btn" style="left:717.6px;top:68px;width:45.4px;height:12.7px;background:transparent;border-color:#bdbdbd;color:#f2f2f2;font-size:4.8px">OTA 2</div>
<div class="sbtn" style="top:103.8px;background:#ff9800">1.PLANETARIUM</div>
<div class="sbtn" style="top:153.6px">2.FOCUS &amp; ROTATE</div>
<div class="sbtn" style="top:203.8px">3.CALIBRATE</div>
<div class="sbtn" style="top:253px">4.PREVIEW</div>
<div class="sbtn" style="top:293.5px;height:113px;padding:0"><svg width="114" height="113" viewBox="0 0 114 113"><path d="M28.5 27.5 L86.5 50 L86.5 62 L28.5 85.5 L28.5 73 L70 56 L28.5 40 Z" fill="#fff"/></svg></div>
</div>
</body>
</html>
